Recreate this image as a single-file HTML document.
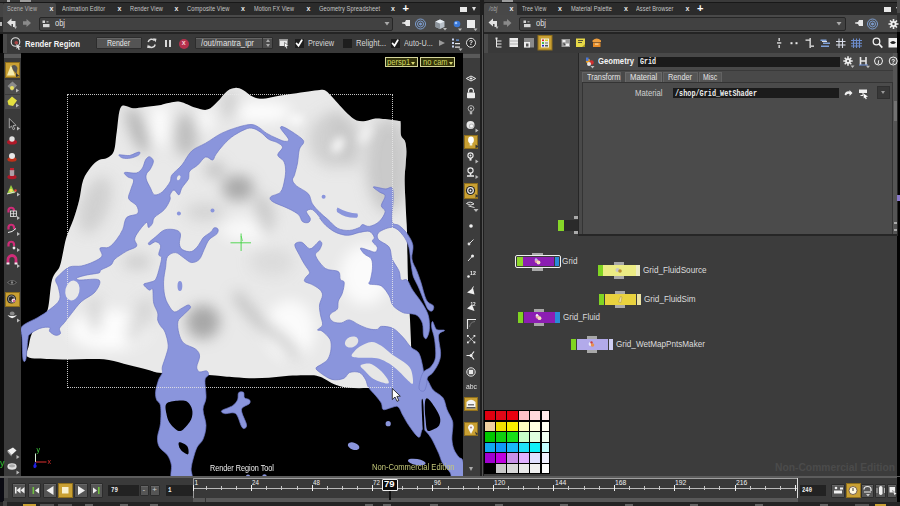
<!DOCTYPE html>
<html><head><meta charset="utf-8">
<style>
html,body{margin:0;padding:0;background:#000;}
body{width:900px;height:506px;position:relative;overflow:hidden;font-family:"Liberation Sans","DejaVu Sans",sans-serif;color:#ddd;font-size:8px;}
.a{position:absolute;}
.t{position:absolute;white-space:nowrap;line-height:1;transform-origin:0 0;}
.tab{transform-origin:0 0;position:absolute;top:6px;font-size:6.6px;color:#c6c6c6;white-space:nowrap;line-height:1;letter-spacing:.1px;}
.x{position:absolute;top:5px;font-size:7px;font-weight:bold;color:#e8e8e8;line-height:1;}
.btn{position:absolute;background:#545454;border:1px solid #2c2c2c;box-sizing:border-box;border-radius:1px;box-shadow:inset 0 1px 0 #666;}
.gold{position:absolute;background:#c9a033;border:1px solid #8f6f1c;box-sizing:border-box;}
.fld{position:absolute;background:#1b1b1b;box-sizing:border-box;}
.mono{font-family:"Liberation Mono","DejaVu Sans Mono",monospace;font-weight:bold;color:#f0f0f0;}
.lbl{transform-origin:0 0;position:absolute;white-space:nowrap;line-height:1;font-size:8.6px;color:#dcdcdc;}
.cb{position:absolute;width:9px;height:9px;background:#1e1e1e;}
</style></head><body>
<!-- top tab bar -->
<div class="a" style="left:0;top:0;width:900px;height:15px;background:#2b2b2b;"></div>
<div class="a" style="left:0;top:0;width:900px;height:2px;background:#3a3a3a;"></div><div class="a" style="left:0;top:2px;width:900px;height:1.2px;background:#181818;"></div><div class="a" style="left:7px;top:0;width:2.5px;height:1.5px;background:#ddd;opacity:.7"></div>
<div class="a" style="left:20px;top:0;width:11px;height:1.5px;background:#e0e0e0;opacity:.6"></div>
<div class="a" style="left:502px;top:0;width:11px;height:1.5px;background:#e0e0e0;opacity:.6"></div>
<!-- left pane tabs -->
<div class="a" style="left:3px;top:3px;width:53px;height:12px;background:#484848;border-radius:2px 2px 0 0;"></div>
<div class="tab" style="transform:scaleX(0.840);left:7px;color:#b4b4b4;">Scene View</div><div class="x" style="left:49.5px;">x</div>
<div class="tab" style="transform:scaleX(0.866);left:62px;">Animation Editor</div><div class="x" style="left:117.5px;">x</div>
<div class="tab" style="transform:scaleX(0.852);left:130px;">Render View</div><div class="x" style="left:174.5px;">x</div>
<div class="tab" style="transform:scaleX(0.869);left:187px;">Composite View</div><div class="x" style="left:241px;">x</div>
<div class="tab" style="transform:scaleX(0.843);left:254px;">Motion FX View</div><div class="x" style="left:306.5px;">x</div>
<div class="tab" style="transform:scaleX(0.872);left:318.5px;">Geometry Spreadsheet</div><div class="x" style="left:391px;">x</div>
<div class="t" style="left:402.5px;top:3px;font-size:11px;font-weight:bold;color:#fff;">+</div>
<div class="a" style="left:460px;top:6.5px;width:6.5px;height:5px;background:#e8e8e8;"></div>
<div class="a" style="left:472px;top:7px;width:0;height:0;border-left:2.5px solid transparent;border-right:2.5px solid transparent;border-top:4px solid #e0e0e0;"></div>
<!-- right pane tabs -->
<div class="a" style="left:484px;top:3px;width:33px;height:12px;background:#484848;border-radius:2px 2px 0 0;"></div>
<div class="tab" style="transform:scaleX(0.771);left:489px;color:#a8a8a8;font-style:italic;">/obj</div><div class="x" style="left:509.5px;">x</div>
<div class="tab" style="transform:scaleX(0.804);left:522px;">Tree View</div><div class="x" style="left:558px;">x</div>
<div class="tab" style="transform:scaleX(0.865);left:571px;">Material Palette</div><div class="x" style="left:624px;">x</div>
<div class="tab" style="transform:scaleX(0.856);left:636px;">Asset Browser</div><div class="x" style="left:685.5px;">x</div>
<div class="t" style="left:697px;top:3px;font-size:11px;font-weight:bold;color:#fff;">+</div>
<div class="a" style="left:884px;top:6.5px;width:6.5px;height:5px;background:#e8e8e8;"></div>
<div class="a" style="left:896px;top:7px;width:0;height:0;border-left:2.5px solid transparent;border-right:2.5px solid transparent;border-top:4px solid #e0e0e0;"></div>
<!-- path bars -->
<div class="a" style="left:0;top:3px;width:3px;height:14px;background:#444;"></div><div class="a" style="left:0;top:17px;width:3px;height:14.5px;background:#2e2e2e;"></div><div class="a" style="left:0;top:22px;width:2.2px;height:4px;background:#ddd;opacity:.8"></div>
<div class="a" style="left:3px;top:15px;width:477px;height:17px;background:#494949;"></div>
<div class="a" style="left:484px;top:15px;width:416px;height:17px;background:#494949;"></div>
<div class="a" style="left:38.5px;top:17px;width:354.5px;height:13.5px;background:#414141;border:1px solid #262626;box-sizing:border-box;border-radius:2px;"></div>
<div class="t" style="transform:scaleX(0.872);left:54.5px;top:18.5px;font-size:8.6px;color:#e0e0e0;">obj</div>
<div class="a" style="left:519px;top:17px;width:327px;height:13.5px;background:#414141;border:1px solid #262626;box-sizing:border-box;border-radius:2px;"></div>
<div class="t" style="transform:scaleX(0.872);left:536px;top:18.5px;font-size:8.6px;color:#e0e0e0;">obj</div>
<!-- toolbar row -->
<div class="a" style="left:0;top:31.5px;width:900px;height:2px;background:#242424;"></div>
<div class="a" style="left:3px;top:33.5px;width:477px;height:19.5px;background:#393939;"></div>
<div class="a" style="left:484px;top:33.5px;width:413px;height:19.5px;background:#393939;"></div>
<div class="a" style="left:3px;top:33.5px;width:4px;height:19.5px;background:#4a4a4a;"></div>
<div class="a" style="left:484px;top:33.5px;width:4px;height:19.5px;background:#4a4a4a;"></div>
<div class="t" style="transform:scaleX(0.871);left:24.5px;top:39.5px;font-size:8.9px;font-weight:bold;color:#f2f2f2;">Render Region</div>
<div class="btn" style="left:96px;top:36.5px;width:46px;height:12.5px;"></div>
<div class="t" style="transform:scaleX(0.807);left:107px;top:38.5px;font-size:8.7px;color:#e6e6e6;">Render</div>
<div class="a" style="left:164.5px;top:39.5px;width:2.2px;height:7.5px;background:#d8d8d8;"></div>
<div class="a" style="left:169px;top:39.5px;width:2.2px;height:7.5px;background:#d8d8d8;"></div>
<div class="a" style="left:179px;top:38.5px;width:10px;height:10px;border-radius:5px;background:#b4304c;"></div>
<div class="t" style="left:181.7px;top:39.4px;font-size:7px;font-weight:bold;color:#f4c8d0;">x</div>
<div class="btn" style="left:195px;top:36.5px;width:78px;height:12.5px;background:#4c4c4c;"></div>
<div class="t" style="transform:scaleX(0.907);left:201px;top:38.5px;font-size:8.7px;color:#e0e0e0;">/out/mantra_ipr</div>
<div class="a" style="left:262px;top:37.5px;width:1px;height:10.5px;background:#333;"></div>
<div class="a" style="left:265.5px;top:39px;width:0;height:0;border-left:2px solid transparent;border-right:2px solid transparent;border-bottom:3px solid #aaa;"></div>
<div class="a" style="left:265.5px;top:44px;width:0;height:0;border-left:2px solid transparent;border-right:2px solid transparent;border-top:3px solid #aaa;"></div>
<div class="cb" style="left:294.5px;top:38.5px;"></div>
<div class="t" style="transform:scaleX(0.841);left:308px;top:38.5px;font-size:8.7px;color:#d6d6d6;">Preview</div>
<div class="cb" style="left:343px;top:38.5px;"></div>
<div class="t" style="transform:scaleX(0.875);left:356px;top:38.5px;font-size:8.7px;color:#d6d6d6;">Relight...</div>
<div class="cb" style="left:390.5px;top:38.5px;"></div>
<div class="t" style="transform:scaleX(0.837);left:404px;top:38.5px;font-size:8.7px;color:#d6d6d6;">Auto-U...</div>
<div class="a" style="left:438.5px;top:39.5px;width:0;height:0;border-top:3.5px solid transparent;border-bottom:3.5px solid transparent;border-left:6px solid #9a9a9a;"></div>
<!-- viewport -->
<div class="a" style="left:0;top:53px;width:484px;height:424px;background:#000;"></div>
<svg class="a" style="left:0;top:0" width="900" height="506" viewBox="0 0 900 506"><defs><clipPath id="vp"><rect x="21" y="53" width="442" height="423.5"/></clipPath></defs><g clip-path="url(#vp)"><defs><clipPath id="tc"><path d="M121.0,107.0C123.7,103.2 129.0,108.3 133.0,108.3C137.0,108.3 140.8,107.5 145.0,107.0C149.2,106.5 153.8,106.2 158.0,105.5C162.2,104.8 166.3,103.3 170.0,102.7C173.7,102.1 175.7,100.9 180.0,101.7C184.3,102.5 191.1,106.4 195.7,107.7C200.3,109.0 203.9,110.6 207.5,109.6C211.1,108.6 214.1,104.8 217.4,101.7C220.7,98.6 224.3,93.2 227.3,90.9C230.3,88.6 232.6,88.1 235.2,87.9C237.8,87.7 240.0,88.4 243.0,89.9C246.0,91.4 249.7,95.3 253.0,96.8C256.3,98.3 259.1,98.9 263.0,98.8C266.9,98.7 271.8,97.0 276.7,96.2C281.6,95.4 287.2,94.6 292.5,93.8C297.8,93.0 303.7,92.2 308.3,91.5C312.9,90.8 317.1,90.0 320.0,89.9C322.9,89.8 324.0,89.8 326.0,90.9C328.0,92.1 329.7,94.3 332.0,96.8C334.3,99.3 337.1,102.6 340.0,105.7C342.9,108.8 346.8,113.1 349.6,115.6C352.4,118.1 354.0,119.6 356.6,120.5C359.2,121.4 362.4,121.4 365.5,121.1C368.6,120.8 372.0,118.8 375.3,118.5C378.6,118.2 381.2,118.7 385.2,119.1C389.1,119.5 396.4,120.5 399.0,121.1C401.6,121.7 400.3,120.1 400.6,122.5C400.9,124.9 400.3,132.2 401.0,135.3C401.7,138.4 404.1,138.7 405.0,141.3C405.9,143.9 406.3,147.2 406.4,151.1C406.5,155.0 405.9,160.2 405.6,165.0C405.3,169.8 404.6,174.2 404.6,180.0C404.6,185.8 405.1,193.2 405.4,199.8C405.7,206.4 406.1,214.2 406.4,219.5C406.7,224.8 406.7,221.3 407.0,231.4C407.3,241.5 407.5,265.3 408.0,280.0C408.5,294.7 409.3,305.0 410.0,319.5C410.7,334.0 411.5,356.2 412.0,367.0C412.5,377.8 420.3,380.5 413.0,384.0C405.7,387.5 380.2,387.6 368.0,388.0C355.8,388.4 348.0,388.2 340.0,386.3C332.0,384.4 325.3,378.6 320.0,376.8C314.7,375.0 313.5,375.5 308.3,375.3C303.1,375.1 295.2,375.4 288.6,375.8C282.0,376.2 275.4,377.4 268.8,377.8C262.2,378.2 255.6,378.4 249.0,378.2C242.4,378.0 236.1,377.4 229.3,376.8C222.6,376.2 219.7,375.5 208.5,374.9C197.3,374.2 172.3,373.7 162.3,372.9C152.3,372.1 154.1,371.2 148.5,369.9C142.9,368.6 135.3,366.6 128.7,365.0C122.1,363.4 115.5,361.0 108.9,360.0C102.3,359.0 95.8,359.2 89.2,359.1C82.6,359.0 76.0,359.4 69.4,359.4C62.8,359.4 56.5,359.5 49.6,359.1C42.7,358.7 31.3,359.4 27.9,357.1C24.4,354.8 28.2,349.1 28.9,345.2C29.6,341.2 30.0,337.6 31.9,333.4C33.8,329.2 37.4,324.0 40.0,320.0C42.6,316.0 45.7,316.3 47.7,309.6C49.7,302.9 50.0,287.1 52.0,280.0C54.0,272.9 57.8,271.1 59.5,267.0C61.2,262.9 61.4,260.1 62.5,255.1C63.6,250.2 64.6,243.2 66.4,237.3C68.2,231.4 71.2,225.8 73.4,219.5C75.6,213.2 77.7,206.4 79.3,199.8C80.9,193.2 81.2,185.5 83.2,180.0C85.2,174.5 88.4,170.3 91.0,167.0C93.6,163.7 96.3,161.5 99.0,160.0C101.7,158.5 104.5,159.5 107.0,158.0C109.5,156.5 112.3,155.4 113.9,151.0C115.5,146.6 115.6,138.7 116.8,131.4C118.0,124.1 118.3,110.8 121.0,107.0Z"/></clipPath><filter id="bl" x="-50%" y="-50%" width="200%" height="200%"><feGaussianBlur stdDeviation="7"/></filter><filter id="bl2" x="-50%" y="-50%" width="200%" height="200%"><feGaussianBlur stdDeviation="4"/></filter></defs>
<path d="M121.0,107.0C123.7,103.2 129.0,108.3 133.0,108.3C137.0,108.3 140.8,107.5 145.0,107.0C149.2,106.5 153.8,106.2 158.0,105.5C162.2,104.8 166.3,103.3 170.0,102.7C173.7,102.1 175.7,100.9 180.0,101.7C184.3,102.5 191.1,106.4 195.7,107.7C200.3,109.0 203.9,110.6 207.5,109.6C211.1,108.6 214.1,104.8 217.4,101.7C220.7,98.6 224.3,93.2 227.3,90.9C230.3,88.6 232.6,88.1 235.2,87.9C237.8,87.7 240.0,88.4 243.0,89.9C246.0,91.4 249.7,95.3 253.0,96.8C256.3,98.3 259.1,98.9 263.0,98.8C266.9,98.7 271.8,97.0 276.7,96.2C281.6,95.4 287.2,94.6 292.5,93.8C297.8,93.0 303.7,92.2 308.3,91.5C312.9,90.8 317.1,90.0 320.0,89.9C322.9,89.8 324.0,89.8 326.0,90.9C328.0,92.1 329.7,94.3 332.0,96.8C334.3,99.3 337.1,102.6 340.0,105.7C342.9,108.8 346.8,113.1 349.6,115.6C352.4,118.1 354.0,119.6 356.6,120.5C359.2,121.4 362.4,121.4 365.5,121.1C368.6,120.8 372.0,118.8 375.3,118.5C378.6,118.2 381.2,118.7 385.2,119.1C389.1,119.5 396.4,120.5 399.0,121.1C401.6,121.7 400.3,120.1 400.6,122.5C400.9,124.9 400.3,132.2 401.0,135.3C401.7,138.4 404.1,138.7 405.0,141.3C405.9,143.9 406.3,147.2 406.4,151.1C406.5,155.0 405.9,160.2 405.6,165.0C405.3,169.8 404.6,174.2 404.6,180.0C404.6,185.8 405.1,193.2 405.4,199.8C405.7,206.4 406.1,214.2 406.4,219.5C406.7,224.8 406.7,221.3 407.0,231.4C407.3,241.5 407.5,265.3 408.0,280.0C408.5,294.7 409.3,305.0 410.0,319.5C410.7,334.0 411.5,356.2 412.0,367.0C412.5,377.8 420.3,380.5 413.0,384.0C405.7,387.5 380.2,387.6 368.0,388.0C355.8,388.4 348.0,388.2 340.0,386.3C332.0,384.4 325.3,378.6 320.0,376.8C314.7,375.0 313.5,375.5 308.3,375.3C303.1,375.1 295.2,375.4 288.6,375.8C282.0,376.2 275.4,377.4 268.8,377.8C262.2,378.2 255.6,378.4 249.0,378.2C242.4,378.0 236.1,377.4 229.3,376.8C222.6,376.2 219.7,375.5 208.5,374.9C197.3,374.2 172.3,373.7 162.3,372.9C152.3,372.1 154.1,371.2 148.5,369.9C142.9,368.6 135.3,366.6 128.7,365.0C122.1,363.4 115.5,361.0 108.9,360.0C102.3,359.0 95.8,359.2 89.2,359.1C82.6,359.0 76.0,359.4 69.4,359.4C62.8,359.4 56.5,359.5 49.6,359.1C42.7,358.7 31.3,359.4 27.9,357.1C24.4,354.8 28.2,349.1 28.9,345.2C29.6,341.2 30.0,337.6 31.9,333.4C33.8,329.2 37.4,324.0 40.0,320.0C42.6,316.0 45.7,316.3 47.7,309.6C49.7,302.9 50.0,287.1 52.0,280.0C54.0,272.9 57.8,271.1 59.5,267.0C61.2,262.9 61.4,260.1 62.5,255.1C63.6,250.2 64.6,243.2 66.4,237.3C68.2,231.4 71.2,225.8 73.4,219.5C75.6,213.2 77.7,206.4 79.3,199.8C80.9,193.2 81.2,185.5 83.2,180.0C85.2,174.5 88.4,170.3 91.0,167.0C93.6,163.7 96.3,161.5 99.0,160.0C101.7,158.5 104.5,159.5 107.0,158.0C109.5,156.5 112.3,155.4 113.9,151.0C115.5,146.6 115.6,138.7 116.8,131.4C118.0,124.1 118.3,110.8 121.0,107.0Z" fill="#e9e9e9"/>
<g clip-path="url(#tc)">
<g filter="url(#bl)">
<ellipse cx="138" cy="130" rx="8" ry="25" fill="#a8a8a8" opacity=".8" transform="rotate(-22 138 130)"/>
<ellipse cx="160" cy="125" rx="9" ry="22" fill="#fff" opacity=".9"/>
<ellipse cx="186" cy="135" rx="12" ry="22" fill="#b4b4b4" opacity=".8"/>
<ellipse cx="205" cy="120" rx="8" ry="12" fill="#fff" opacity=".8"/>
<ellipse cx="262" cy="112" rx="30" ry="10" fill="#fff" opacity=".9"/>
<ellipse cx="230" cy="105" rx="8" ry="14" fill="#c0c0c0" opacity=".7"/>
<ellipse cx="335" cy="140" rx="26" ry="28" fill="#bcbcbc" opacity=".55"/>
<ellipse cx="388" cy="165" rx="22" ry="48" fill="#bcbcbc" opacity=".7"/>
<ellipse cx="238" cy="188" rx="16" ry="13" fill="#999" opacity=".8"/>
<ellipse cx="215" cy="170" rx="10" ry="8" fill="#b0b0b0" opacity=".7"/>
<ellipse cx="203" cy="322" rx="17" ry="17" fill="#9c9c9c" opacity=".85"/>
<ellipse cx="272" cy="262" rx="22" ry="14" fill="#c8c8c8" opacity=".4"/>
<ellipse cx="95" cy="205" rx="14" ry="30" fill="#c6c6c6" opacity=".7" transform="rotate(20 95 205)"/>
<ellipse cx="110" cy="330" rx="40" ry="20" fill="#fff" opacity=".9"/>
<ellipse cx="290" cy="330" rx="25" ry="30" fill="#fff" opacity=".8"/>
<ellipse cx="365" cy="275" rx="25" ry="30" fill="#fff" opacity=".8"/>
<ellipse cx="250" cy="230" rx="30" ry="12" fill="#fff" opacity=".7"/>
<ellipse cx="140" cy="320" rx="10" ry="25" fill="#c8c8c8" opacity=".6" transform="rotate(25 140 320)"/>
<path d="M236,293 Q250,316 270,330 T297,358" stroke="#a8a8a8" stroke-width="9" fill="none" opacity=".7"/>
<ellipse cx="137" cy="262" rx="14" ry="7" fill="#b8b8b8" opacity=".6"/>
<ellipse cx="95" cy="315" rx="7" ry="18" fill="#c0c0c0" opacity=".6"/>
<ellipse cx="265" cy="215" rx="9" ry="22" fill="#b4b4b4" opacity=".6" transform="rotate(-15 265 215)"/>
<ellipse cx="205" cy="212" rx="20" ry="9" fill="#c0c0c0" opacity=".5"/>
<ellipse cx="345" cy="140" rx="8" ry="32" fill="#c0c0c0" opacity=".5" transform="rotate(-20 345 140)"/>
</g>
<g filter="url(#bl2)">
<ellipse cx="338" cy="145" rx="5" ry="9" fill="#fff" opacity=".9" transform="rotate(30 338 145)"/>
<ellipse cx="296" cy="120" rx="8" ry="5" fill="#fff" opacity=".8"/>
<ellipse cx="365" cy="135" rx="5" ry="10" fill="#fff" opacity=".6" transform="rotate(30 365 135)"/>
</g>
</g>
<path d="M118.8,155.1C118.9,155.6 120.8,157.6 122.8,158.1C124.8,158.6 128.1,158.6 130.7,158.1C133.3,157.6 137.1,156.1 138.6,155.1C140.1,154.1 140.1,152.4 139.6,152.1C139.1,151.8 137.2,152.5 135.6,153.1C133.9,153.7 132.0,155.2 129.7,155.5C127.4,155.8 123.8,155.1 122.0,155.0C120.2,154.9 118.7,154.6 118.8,155.1Z" fill="#8a95dc" stroke="#6e79c6" stroke-width=".7"/>
<path d="M149.4,156.7C150.7,156.9 153.2,159.0 153.4,161.0C153.6,163.0 151.6,166.8 150.4,168.9C149.2,171.1 147.2,172.1 146.5,173.9C145.8,175.8 145.8,177.7 146.5,180.0C147.2,182.3 149.1,185.4 150.4,187.9C151.7,190.4 152.4,194.1 154.4,194.8C156.4,195.5 159.7,194.0 162.3,191.9C164.9,189.8 168.4,184.8 170.0,182.0C171.6,179.2 170.0,177.7 172.0,174.9C174.0,172.1 178.6,169.0 181.9,165.0C185.2,161.0 187.8,154.6 191.7,151.0C195.6,147.4 200.6,146.1 205.6,143.2C210.6,140.3 216.1,136.0 221.4,133.4C226.7,130.8 232.3,128.9 237.2,127.4C242.1,125.9 247.4,124.5 251.0,124.5C254.6,124.5 256.3,125.9 258.9,127.4C261.5,128.9 263.8,131.6 266.8,133.4C269.8,135.2 273.7,137.0 276.7,138.3C279.7,139.6 282.6,141.1 284.6,141.3C286.6,141.5 289.2,141.5 288.6,139.3C288.0,137.2 281.5,130.5 280.7,128.4C279.9,126.4 281.3,126.2 283.6,127.0C285.9,127.8 291.4,131.3 294.5,133.4C297.6,135.5 300.9,137.7 302.4,139.3C303.9,140.9 303.9,141.5 303.4,143.2C302.9,144.8 300.4,145.9 299.4,149.2C298.4,152.5 298.3,158.7 297.5,163.0C296.7,167.3 295.3,172.1 294.5,174.9C293.7,177.7 292.2,178.2 292.5,180.0C292.8,181.8 293.9,183.6 296.5,185.9C299.1,188.2 305.7,190.8 308.3,193.8C310.9,196.8 310.4,200.6 312.3,203.7C314.2,206.8 317.4,210.0 320.0,212.6C322.6,215.2 324.9,216.9 327.9,219.5C330.9,222.1 334.2,226.6 337.8,228.4C341.4,230.2 346.0,230.6 349.6,230.4C353.2,230.2 357.4,228.4 359.5,227.4C361.6,226.4 360.9,224.7 362.5,224.5C364.1,224.3 366.6,226.9 369.4,226.4C372.2,225.9 376.7,224.0 379.3,221.5C381.9,219.0 384.9,214.2 385.2,211.6C385.5,209.0 381.3,208.3 381.3,205.7C381.3,203.1 385.5,198.1 385.2,195.8C384.9,193.5 381.3,193.4 379.3,191.9C377.3,190.4 372.4,187.4 373.4,186.9C374.4,186.4 382.1,188.7 385.2,188.9C388.3,189.1 390.8,186.1 392.1,187.9C393.4,189.7 393.1,194.2 393.1,199.8C393.1,205.4 391.1,217.2 392.1,221.5C393.1,225.8 396.5,223.5 399.0,225.5C401.5,227.5 404.7,230.1 407.0,233.4C409.3,236.7 412.1,240.9 412.9,245.2C413.7,249.5 411.2,254.7 411.9,259.0C412.5,263.3 415.3,267.1 416.8,270.9C418.3,274.7 419.2,277.2 420.8,282.0C422.4,286.8 424.3,295.9 426.4,299.9C428.5,303.9 432.4,304.0 433.4,305.8C434.4,307.6 433.2,310.1 432.4,310.8C431.6,311.5 429.7,311.3 428.4,309.8C427.1,308.3 426.1,305.5 424.5,301.9C422.9,298.3 420.4,291.6 418.8,288.0C417.2,284.4 415.9,282.2 414.9,280.0C413.9,277.8 413.6,277.7 412.9,274.9C412.2,272.1 411.6,267.6 410.9,263.0C410.2,258.4 410.2,251.8 408.9,247.2C407.6,242.6 405.6,238.6 403.0,235.3C400.4,232.0 396.9,228.0 393.0,227.4C389.1,226.8 381.8,230.0 379.3,232.0C376.9,234.0 376.7,236.8 378.3,239.3C379.9,241.8 386.9,243.9 389.2,247.2C391.5,250.5 390.5,255.1 392.1,259.0C393.7,262.9 397.5,267.4 399.0,270.9C400.5,274.4 399.7,278.5 401.0,280.0C402.3,281.5 405.1,278.3 407.0,280.0C408.9,281.7 410.0,286.0 412.6,290.0C415.2,294.0 419.9,299.5 422.5,303.8C425.1,308.1 427.2,311.4 428.4,315.7C429.5,320.0 429.7,325.7 429.4,329.5C429.1,333.3 427.4,337.4 426.4,338.4C425.4,339.4 424.1,338.0 423.5,335.5C422.9,333.0 423.5,326.9 422.5,323.6C421.5,320.3 419.5,317.4 417.5,315.7C415.5,314.0 413.0,314.2 410.6,313.7C408.2,313.2 405.9,313.9 403.0,312.6C400.1,311.3 395.4,308.5 393.1,305.7C390.8,302.9 391.2,299.1 389.2,295.8C387.2,292.5 384.6,287.9 381.3,285.9C378.0,283.9 371.2,285.0 369.4,284.0C367.6,283.0 369.9,282.5 370.4,280.0C370.9,277.5 372.2,272.4 372.4,268.9C372.6,265.4 372.7,261.5 371.4,259.0C370.1,256.5 366.3,255.9 364.5,254.1C362.7,252.3 359.9,248.8 360.5,248.2C361.1,247.5 365.9,249.5 368.4,250.2C370.9,250.8 373.8,252.6 375.3,252.1C376.8,251.6 377.8,249.0 377.3,247.2C376.8,245.4 372.9,243.0 372.4,241.3C371.9,239.7 374.8,239.0 374.3,237.3C373.8,235.7 371.9,232.2 369.4,231.4C366.9,230.6 363.1,231.8 359.5,232.4C355.9,233.1 351.6,235.3 347.7,235.3C343.8,235.3 339.4,234.0 335.8,232.4C332.2,230.8 328.5,227.8 325.9,225.5C323.3,223.2 321.0,219.8 320.0,218.5C319.0,217.2 321.3,219.0 320.0,217.5C318.7,216.0 314.6,210.6 312.3,209.6C310.0,208.6 306.7,210.1 306.4,211.6C306.1,213.1 310.0,216.7 310.3,218.5C310.6,220.3 309.6,222.0 308.3,222.5C307.0,223.0 304.0,222.8 302.4,221.5C300.8,220.2 300.8,216.7 298.5,214.6C296.2,212.5 292.9,210.8 288.6,208.7C284.3,206.5 275.8,203.7 272.8,201.7C269.8,199.7 269.5,198.4 270.8,196.8C272.1,195.2 278.4,194.7 280.7,191.9C283.0,189.1 283.8,183.8 284.6,180.0C285.4,176.2 285.8,172.2 285.6,169.0C285.4,165.8 284.9,163.3 283.6,161.0C282.3,158.7 277.9,157.3 277.7,155.0C277.5,152.7 282.8,149.3 282.6,147.2C282.4,145.1 279.0,143.6 276.7,142.3C274.4,141.0 271.4,141.0 268.8,139.3C266.2,137.7 263.5,134.2 260.9,132.4C258.3,130.6 255.7,128.9 253.0,128.4C250.3,127.9 248.6,127.9 245.0,129.4C241.4,130.9 235.2,134.3 231.3,137.3C227.4,140.3 224.0,144.2 221.4,147.2C218.8,150.1 217.0,152.9 215.5,155.0C214.0,157.1 214.2,159.7 212.5,160.0C210.8,160.3 208.1,156.2 205.6,157.0C203.1,157.8 200.3,162.7 197.7,165.0C195.1,167.3 191.3,169.0 189.8,171.0C188.3,173.0 189.1,175.3 188.8,176.8C188.5,178.3 189.0,178.2 187.8,180.0C186.7,181.8 183.4,185.4 181.9,187.9C180.4,190.4 180.2,194.5 178.9,194.8C177.6,195.1 175.5,189.9 174.0,189.9C172.5,189.9 170.7,193.2 170.0,194.8C169.3,196.5 170.9,197.3 170.0,199.8C169.1,202.3 166.9,206.7 164.3,209.6C161.7,212.5 156.4,215.2 154.4,217.5C152.4,219.8 153.4,221.8 152.4,223.5C151.4,225.2 149.5,227.6 148.5,227.4C147.5,227.2 148.2,221.8 146.5,222.5C144.8,223.2 140.6,228.6 138.6,231.4C136.6,234.2 134.9,236.8 134.6,239.3C134.3,241.8 137.9,244.2 136.6,246.2C135.3,248.2 130.3,249.0 126.7,251.1C123.1,253.2 117.5,256.7 114.9,259.0C112.3,261.3 113.2,263.2 110.9,265.0C108.6,266.8 103.0,268.6 101.0,269.9C99.0,271.2 101.3,272.1 99.0,272.9C96.7,273.7 90.8,274.1 87.2,274.9C83.6,275.7 78.6,276.9 77.3,277.8C76.0,278.7 75.7,279.6 79.3,280.0C82.9,280.4 96.4,278.0 99.0,280.0C101.6,282.0 98.0,288.3 95.1,291.9C92.1,295.5 85.2,298.1 81.3,301.7C77.3,305.3 74.2,310.1 71.4,313.6C68.6,317.1 66.5,320.0 64.5,322.5C62.5,325.0 60.2,326.6 59.5,328.4C58.8,330.2 61.1,332.2 60.5,333.4C59.9,334.5 57.4,335.6 55.6,335.3C53.8,335.0 50.6,332.7 49.6,331.4C48.6,330.1 51.2,327.9 49.6,327.4C48.0,326.9 43.1,327.2 39.8,328.4C36.5,329.5 31.9,332.5 29.9,334.3C27.9,336.1 28.6,335.2 27.9,339.3C27.2,343.4 26.7,355.7 25.9,359.0C25.1,362.3 23.6,362.6 23.0,359.0C22.4,355.4 22.3,342.4 22.0,337.3C21.7,332.2 20.4,330.7 21.0,328.4C21.6,326.1 23.1,325.3 25.9,323.5C28.7,321.7 33.8,319.8 37.8,317.5C41.8,315.2 46.0,312.6 49.6,309.6C53.2,306.7 58.0,303.4 59.5,299.8C61.0,296.2 59.1,291.2 58.5,287.9C57.9,284.6 55.4,282.2 55.6,280.0C55.8,277.8 57.2,277.1 59.5,274.9C61.8,272.7 65.8,268.5 69.4,267.0C73.0,265.5 77.3,266.8 81.3,266.0C85.2,265.2 89.6,263.6 93.1,262.0C96.5,260.4 100.8,258.4 102.0,256.1C103.2,253.8 98.8,249.7 100.0,248.2C101.2,246.7 106.1,248.7 108.9,247.2C111.7,245.7 114.5,242.3 116.8,239.3C119.1,236.3 121.1,233.0 122.8,229.4C124.5,225.8 124.2,220.1 126.7,217.5C129.2,214.9 135.9,215.6 137.6,213.6C139.2,211.6 138.1,208.2 136.6,205.7C135.1,203.2 129.7,201.4 128.7,198.8C127.7,196.2 129.9,193.0 130.7,189.9C131.5,186.8 134.1,182.2 133.6,180.0C133.1,177.8 129.2,178.1 127.7,176.8C126.2,175.6 123.2,173.2 124.7,172.5C126.2,171.8 133.6,173.7 136.6,172.9C139.6,172.1 141.0,170.1 142.5,167.9C144.0,165.8 144.3,161.9 145.5,160.0C146.7,158.1 148.1,156.5 149.4,156.7Z" fill="#8a95dc" stroke="#6e79c6" stroke-width=".7"/>
<path d="M148.8,242.7C149.8,241.4 153.1,238.9 155.7,236.8C158.3,234.7 161.3,231.1 164.6,229.9C167.9,228.8 172.9,229.2 175.5,229.9C178.1,230.6 179.8,231.5 180.4,233.8C181.1,236.1 179.1,241.1 179.4,243.7C179.7,246.3 180.4,248.3 182.4,249.6C184.4,250.9 188.7,252.2 191.3,251.6C193.9,250.9 196.2,248.0 198.2,245.7C200.2,243.4 201.0,240.1 203.1,237.8C205.2,235.5 209.2,233.6 211.0,231.9C212.8,230.2 212.8,228.4 214.0,227.9C215.2,227.4 217.4,227.9 217.9,228.9C218.4,229.9 218.4,232.0 216.9,233.8C215.4,235.6 211.1,237.2 209.0,239.8C206.9,242.4 205.7,246.3 204.1,249.6C202.5,252.9 201.3,257.4 199.2,259.5C197.1,261.6 193.9,262.8 191.3,262.5C188.7,262.2 186.0,259.1 183.4,257.5C180.8,255.8 178.2,252.8 175.5,252.6C172.8,252.4 169.2,254.1 167.5,256.6C165.8,259.1 166.2,263.3 165.6,267.4C164.9,271.5 163.8,276.7 163.6,281.3C163.4,285.9 163.8,291.2 164.6,295.1C165.4,299.1 166.8,302.2 168.5,305.0C170.2,307.8 172.2,311.4 174.5,311.9C176.8,312.4 180.1,309.0 182.4,307.9C184.7,306.8 187.0,305.0 188.3,305.0C189.6,305.0 191.1,306.2 190.3,307.9C189.5,309.5 185.5,312.6 183.4,314.9C181.3,317.2 178.7,318.4 177.9,321.5C177.2,324.6 177.9,329.8 178.9,333.4C179.9,337.0 181.0,340.6 183.8,343.2C186.6,345.8 193.1,347.0 195.7,349.2C198.3,351.4 199.4,353.1 199.6,356.1C199.8,359.1 196.7,364.4 196.7,367.0C196.7,369.6 197.9,371.2 199.6,371.9C201.2,372.5 205.1,370.4 206.6,370.9C208.1,371.4 208.8,373.4 208.5,374.9C208.2,376.4 205.4,376.2 205.0,380.0C204.6,383.8 206.3,392.9 206.0,397.8C205.7,402.7 203.0,405.0 203.0,409.6C203.0,414.2 206.0,420.6 206.0,425.5C206.0,430.4 204.5,435.7 203.0,439.3C201.5,442.9 198.8,443.9 197.1,447.2C195.4,450.5 194.1,455.4 193.1,459.0C192.1,462.6 191.4,465.4 191.1,468.9C190.8,472.4 194.2,478.1 191.1,480.0C188.0,481.9 175.7,482.5 172.4,480.0C169.1,477.5 172.2,469.1 171.4,465.0C170.6,460.9 169.4,458.1 167.4,455.1C165.4,452.1 161.2,450.2 159.5,447.2C157.8,444.2 157.3,441.2 157.5,437.3C157.7,433.4 160.0,428.8 160.5,423.5C161.0,418.2 161.2,409.6 160.5,405.7C159.8,401.8 157.4,402.1 156.6,399.8C155.8,397.5 155.3,395.2 155.6,391.9C155.9,388.6 157.4,383.2 158.5,380.0C159.6,376.8 161.7,375.1 162.3,372.9C162.9,370.7 161.7,370.0 162.3,367.0C163.0,364.0 165.2,358.7 166.2,355.1C167.2,351.5 168.4,349.1 168.2,345.2C168.0,341.3 166.3,335.3 165.0,332.0C163.7,328.7 161.5,327.5 160.3,325.5C159.1,323.5 158.1,322.1 157.7,320.0C157.3,317.9 158.4,315.7 157.7,312.9C157.0,310.1 154.5,306.9 153.7,303.0C152.9,299.1 153.3,291.3 152.7,289.2C152.0,287.1 150.8,290.4 149.8,290.2C148.8,290.0 147.8,289.2 146.8,288.2C145.8,287.2 143.3,285.2 143.8,284.2C144.3,283.2 147.8,283.1 149.8,282.3C151.8,281.5 154.1,281.8 155.7,279.3C157.3,276.8 158.6,271.0 159.6,267.4C160.6,263.8 161.8,259.6 161.6,257.5C161.4,255.4 158.9,256.6 158.7,254.6C158.5,252.6 161.1,247.8 160.6,245.7C160.1,243.5 157.5,241.9 155.7,241.7C153.9,241.5 151.0,244.5 149.8,244.7C148.7,244.9 147.8,244.0 148.8,242.7Z" fill="#8a95dc" stroke="#6e79c6" stroke-width=".7"/>
<path d="M238.6,392.8C239.6,391.6 242.5,391.5 243.5,392.3C244.5,393.1 243.5,396.6 244.5,397.8C245.5,399.1 248.6,398.8 249.4,399.8C250.2,400.8 250.7,402.1 249.4,403.7C248.1,405.3 242.0,406.1 241.5,409.6C241.0,413.1 246.0,421.4 246.5,424.5C247.0,427.6 245.3,428.1 244.5,428.4C243.7,428.7 243.0,428.9 241.5,426.4C240.0,423.9 238.4,415.7 235.6,413.6C232.8,411.5 227.0,414.1 224.7,413.6C222.4,413.1 220.5,411.9 221.8,410.6C223.1,409.3 230.0,407.5 232.6,405.7C235.2,403.9 236.6,401.9 237.6,399.8C238.6,397.7 237.6,394.1 238.6,392.8Z" fill="#8a95dc" stroke="#6e79c6" stroke-width=".7"/>
<path d="M294.8,244.8C295.1,242.6 299.2,241.6 301.7,242.3C304.2,243.0 307.3,248.4 309.6,248.8C311.9,249.2 314.0,246.1 315.6,244.8C317.2,243.5 318.4,241.1 319.5,240.9C320.6,240.7 321.9,242.3 321.9,243.8C321.9,245.3 320.6,247.8 319.5,249.8C318.4,251.8 314.6,252.6 315.6,255.7C316.6,258.8 321.7,265.9 325.5,268.5C329.3,271.1 335.8,269.7 338.3,271.5C340.8,273.3 339.3,277.6 340.3,279.4C341.3,281.2 343.9,280.1 344.2,282.4C344.5,284.7 343.3,290.1 342.3,293.2C341.3,296.3 339.1,298.5 338.3,301.1C337.5,303.8 338.5,307.1 337.3,309.1C336.1,311.1 332.7,311.7 331.4,313.0C330.1,314.3 329.1,315.5 329.4,317.0C329.7,318.5 331.4,320.9 333.4,321.9C335.4,322.9 338.7,323.2 341.3,322.9C343.9,322.6 346.2,319.6 349.2,319.9C352.2,320.2 355.8,323.4 359.1,324.9C362.4,326.4 365.9,328.1 368.9,328.8C371.9,329.6 375.2,329.8 377.3,329.4C379.4,329.0 378.7,326.6 381.3,326.4C383.9,326.2 389.5,326.6 393.1,328.4C396.7,330.2 400.0,334.2 403.0,337.3C406.0,340.4 408.3,344.6 410.9,347.2C413.5,349.8 416.8,349.8 418.8,353.1C420.8,356.4 422.0,363.1 422.8,367.0C423.6,370.9 423.6,374.0 423.8,376.8C424.0,379.6 423.4,383.5 424.0,384.0C424.6,384.5 425.7,379.0 427.2,380.0C428.7,381.0 430.5,386.9 433.1,389.9C435.7,392.9 440.7,394.5 443.0,397.8C445.3,401.1 445.5,406.0 447.0,409.6C448.5,413.2 450.9,416.9 451.9,419.5C452.9,422.1 452.9,422.2 452.9,425.5C452.9,428.8 451.7,435.4 451.9,439.3C452.1,443.2 452.8,446.2 453.9,449.2C455.0,452.2 457.3,455.1 458.8,457.1C460.3,459.1 461.9,457.2 462.8,461.0C463.7,464.8 465.8,476.8 464.0,480.0C462.2,483.2 454.3,481.2 452.0,480.0C449.7,478.8 452.0,475.7 450.4,472.9C448.8,470.1 444.5,466.3 442.5,463.0C440.5,459.7 440.6,457.4 438.6,453.1C436.6,448.8 433.3,441.2 430.7,437.3C428.1,433.4 424.8,429.4 422.8,429.4C420.8,429.4 421.1,437.9 418.8,437.3C416.5,436.7 411.5,429.1 408.9,425.5C406.3,421.9 404.8,418.7 403.0,415.6C401.2,412.5 400.0,408.0 398.0,406.7C396.0,405.4 393.6,407.2 391.1,407.7C388.6,408.2 384.8,410.4 383.2,409.6C381.6,408.8 382.6,405.5 381.3,403.1C380.0,400.7 377.5,397.8 375.3,395.2C373.1,392.6 370.0,389.9 368.4,387.3C366.8,384.7 367.0,381.9 365.5,379.4C364.0,376.9 362.1,373.6 359.5,372.5C356.9,371.4 352.2,371.5 349.6,372.5C347.0,373.5 346.6,377.2 343.7,378.4C340.8,379.5 335.8,380.4 331.9,379.4C327.9,378.4 322.6,374.4 320.0,372.5C317.4,370.6 315.7,369.4 316.0,368.0C316.3,366.6 320.0,365.5 322.0,364.0C324.0,362.5 326.5,361.5 328.0,359.0C329.5,356.5 330.7,352.5 331.0,349.2C331.3,345.9 331.5,342.3 330.0,339.3C328.5,336.3 324.1,332.6 322.0,331.0C319.9,329.4 317.4,331.0 317.5,330.0C317.6,329.0 322.0,327.4 322.5,324.9C323.0,322.4 321.0,318.3 320.5,315.0C320.0,311.7 319.2,308.4 319.5,305.1C319.8,301.8 322.5,297.8 322.5,295.2C322.5,292.6 321.3,291.1 319.5,289.3C317.7,287.5 314.1,285.6 311.6,284.3C309.1,283.0 305.7,282.5 304.7,281.4C303.7,280.2 304.9,278.9 305.7,277.4C306.5,275.9 309.8,274.6 309.6,272.5C309.4,270.4 306.3,267.4 304.7,264.6C303.1,261.8 301.4,259.0 299.8,255.7C298.2,252.4 294.5,247.0 294.8,244.8Z" fill="#8a95dc" stroke="#6e79c6" stroke-width=".7"/>
<path d="M432.6,321.5C433.4,321.8 434.6,327.9 436.6,329.4C438.6,330.9 444.2,329.4 444.5,330.4C444.8,331.4 439.2,331.5 438.6,335.3C438.0,339.1 440.6,348.5 440.6,353.1C440.6,357.7 439.9,359.7 438.6,363.0C437.3,366.3 434.4,370.6 432.6,372.9C430.8,375.2 428.7,375.1 427.7,377.0C426.7,378.9 427.3,381.7 426.7,384.0C426.1,386.3 425.3,390.3 424.0,391.0C422.7,391.7 419.2,391.0 419.0,388.0C418.8,385.0 420.9,376.4 422.8,372.9C424.8,369.4 428.6,369.6 430.7,367.0C432.8,364.4 435.0,361.7 435.6,357.1C436.2,352.5 435.2,344.2 434.6,339.3C434.0,334.4 432.0,330.4 431.7,327.4C431.4,324.4 431.8,321.2 432.6,321.5Z" fill="#8a95dc" stroke="#6e79c6" stroke-width=".7"/>
<path d="M351.6,355.7C351.6,353.9 356.2,349.1 359.5,346.8C362.8,344.5 367.8,342.1 371.4,341.9C375.0,341.7 378.0,343.8 381.3,345.8C384.6,347.8 387.5,351.1 391.1,353.7C394.7,356.3 399.7,359.0 403.0,361.6C406.3,364.2 409.2,365.9 410.9,369.5C412.5,373.1 413.5,381.8 412.9,383.4C412.2,385.0 409.3,381.4 407.0,379.4C404.7,377.4 402.0,374.1 399.0,371.5C396.0,368.9 392.5,365.7 389.2,363.6C385.9,361.5 382.6,359.7 379.3,358.7C376.0,357.7 372.7,357.9 369.4,357.7C366.1,357.5 362.5,358.0 359.5,357.7C356.5,357.4 351.6,357.5 351.6,355.7Z" fill="#e6e6e6"/>
<path d="M360.5,365.6C361.1,364.3 366.3,363.0 369.4,363.6C372.5,364.2 376.3,367.0 379.3,369.5C382.3,372.0 385.7,376.1 387.2,378.4C388.7,380.7 389.5,382.9 388.2,383.4C386.9,383.9 382.1,382.4 379.3,381.4C376.5,380.4 373.7,379.0 371.4,377.4C369.1,375.8 367.3,373.5 365.5,371.5C363.7,369.5 359.9,366.9 360.5,365.6Z" fill="#e6e6e6"/>
<path d="M166.4,403.7C168.2,401.6 173.8,401.1 177.3,400.8C180.8,400.5 184.7,400.2 187.2,401.7C189.7,403.2 191.4,406.6 192.1,409.6C192.8,412.6 192.6,416.2 191.1,419.5C189.6,422.8 185.5,427.6 183.2,429.4C180.9,431.2 179.6,431.5 177.3,430.4C175.0,429.2 171.2,425.3 169.4,422.5C167.6,419.7 166.9,416.7 166.4,413.6C165.9,410.5 164.6,405.8 166.4,403.7Z" fill="#000"/>
<path d="M179.3,442.3C180.6,442.1 185.7,444.2 187.2,446.2C188.7,448.2 188.9,453.1 188.2,454.1C187.5,455.1 184.7,453.2 183.2,452.1C181.7,451.0 180.0,448.8 179.3,447.2C178.7,445.6 178.0,442.5 179.3,442.3Z" fill="#000"/>
<path d="M425.4,400.0C426.0,398.2 426.6,397.5 428.2,398.8C429.8,400.1 433.1,404.6 435.1,407.7C437.1,410.8 439.3,414.5 440.0,417.5C440.7,420.5 440.2,423.5 439.1,425.5C438.0,427.5 435.1,428.6 433.1,429.4C431.2,430.2 428.6,432.0 427.4,430.4C426.1,428.8 426.0,423.0 425.6,419.5C425.2,416.0 424.8,412.9 424.8,409.6C424.8,406.4 424.8,401.8 425.4,400.0Z" fill="#000"/>
<path d="M421.6,403.0C421.6,397.3 422.7,397.5 423.2,403.0C423.7,408.5 424.6,430.3 424.6,436.0C424.6,441.7 423.7,442.5 423.2,437.0C422.7,431.5 421.6,408.7 421.6,403.0Z" fill="#000"/>

<ellipse cx="72.4" cy="290.5" rx="7" ry="10" transform="rotate(12 72.4 290.5)" fill="#e8e8e8"/>
<ellipse cx="178.7" cy="177.8" rx="1.6" ry="2.6" transform="rotate(25 178.7 177.8)" fill="#e8e8e8"/>
<ellipse cx="351.6" cy="342" rx="7" ry="5.2" transform="rotate(-25 351.6 342)" fill="#e4e4e4"/>
<g fill="#8a95dc">
<circle cx="178.9" cy="213.6" r="2"/><circle cx="212.5" cy="210.6" r="2"/><circle cx="323.6" cy="196.8" r="2"/>
<path d="M337.5,207.5 Q347,213 357.5,213.5 Q358.5,215.5 357,217.8 Q346,218.5 337,212 Q336,209 337.5,207.5 Z"/>
<ellipse cx="179.9" cy="286" rx="2.4" ry="5"/>
<circle cx="388.2" cy="423.7" r="2.6"/>
<ellipse cx="353.6" cy="446.2" rx="6" ry="3.5" transform="rotate(20 353.6 446.2)"/>
<ellipse cx="416.8" cy="462" rx="9" ry="3" transform="rotate(10 416.8 462)"/><ellipse cx="248" cy="476" rx="2" ry="1.6"/><ellipse cx="264.5" cy="476" rx="2.2" ry="1.8"/>
</g>
</g></svg>
<!-- viewport overlays -->
<div class="a" style="left:67px;top:94px;width:326px;height:293.5px;border:1px dotted #e8e8e8;box-sizing:border-box;opacity:.85"></div>
<div class="a" style="left:384.5px;top:57px;width:33.5px;height:10px;background:#33330a;border:1px solid #d6d69a;box-sizing:border-box;"></div>
<div class="t" style="transform:scaleX(0.910);left:387px;top:57.8px;font-size:8.4px;color:#d0d860;">persp1</div>
<div class="a" style="left:411px;top:61.5px;width:0;height:0;border-left:2.5px solid transparent;border-right:2.5px solid transparent;border-top:3px solid #d8d870;"></div>
<div class="a" style="left:420px;top:57px;width:35px;height:10px;background:#33330a;border:1px solid #d6d69a;box-sizing:border-box;"></div>
<div class="t" style="transform:scaleX(0.896);left:422.5px;top:57.8px;font-size:8.4px;color:#d0d860;">no cam</div>
<div class="a" style="left:448.5px;top:61.5px;width:0;height:0;border-left:2.5px solid transparent;border-right:2.5px solid transparent;border-top:3px solid #d8d870;"></div>
<div class="t" style="transform:scaleX(0.866);left:209.5px;top:463.5px;font-size:8.4px;color:#f0f0f0;">Render Region Tool</div>
<div class="t" style="transform:scaleX(0.887);left:371.5px;top:462.5px;font-size:8.6px;color:#c4c87a;">Non-Commercial Edition</div>
<!-- left toolbar -->
<div class="a" style="left:0;top:53px;width:3.5px;height:424px;background:#0c0c0c;"></div>
<div class="a" style="left:3.5px;top:53px;width:17.5px;height:424px;background:#3b3b3b;"></div>
<div class="a" style="left:3.5px;top:54px;width:17.5px;height:4px;background:#5c5c5c;"></div>
<div class="gold" style="left:4.5px;top:62px;width:15.5px;height:16px;"></div>
<div class="a" style="left:4.5px;top:80px;width:15.5px;height:13.5px;background:#4d4d4d;"></div>
<div class="a" style="left:4.5px;top:95px;width:15.5px;height:13.5px;background:#4d4d4d;"></div>
<div class="gold" style="left:4.5px;top:291.5px;width:15.5px;height:15.5px;"></div>
<div class="t" style="left:0;top:459px;font-size:9px;color:#38c838;">y</div>
<!-- right toolbar -->
<div class="a" style="left:463px;top:53px;width:17px;height:424px;background:#3c3c3c;"></div>
<div class="a" style="left:463px;top:54px;width:17px;height:4px;background:#5a5a5a;"></div>
<div class="a" style="left:480px;top:0;width:4px;height:477px;background:#1e1e1e;"></div>
<div class="a" style="left:482px;top:15px;width:1px;height:462px;background:#555;"></div>
<div class="gold" style="left:463.7px;top:134.5px;width:14.6px;height:14.8px;"></div>
<div class="gold" style="left:463.7px;top:183px;width:14.6px;height:15.5px;"></div>
<div class="gold" style="left:463.7px;top:397px;width:14.6px;height:14px;"></div>
<div class="gold" style="left:463.7px;top:422px;width:14.6px;height:14px;"></div>
<div class="t" style="transform:scaleX(1.034);left:465.5px;top:384px;font-size:6.6px;color:#e4e4e4;">abc</div>
<div class="a" style="left:468.5px;top:467px;width:0;height:0;border-left:2.8px solid transparent;border-right:2.8px solid transparent;border-top:4.5px solid #aaa;"></div>
<!-- network pane -->
<div class="a" style="left:484px;top:53px;width:413px;height:424px;background:#3c3c3c;"></div>
<div class="a" style="left:897px;top:0;width:3px;height:13px;background:#4a4a4a;"></div><div class="a" style="left:897px;top:13px;width:3px;height:19px;background:#303030;"></div><div class="a" style="left:897px;top:32px;width:3px;height:474px;background:#030303;"></div>
<!-- nodes -->
<div class="a" style="left:558px;top:220px;width:5.5px;height:10.5px;background:#86d628;"></div>
<div class="a" style="left:563.5px;top:220px;width:15px;height:10.5px;background:#2a2a2a;"></div>
<div class="a" style="left:574px;top:216px;width:4.5px;height:3px;background:#aaa;"></div>
<div class="a" style="left:574px;top:230.5px;width:4.5px;height:3px;background:#aaa;"></div>
<!-- Grid (selected) -->
<div class="a" style="left:532px;top:252.5px;width:11px;height:3px;background:#a8a8a8;"></div>
<div class="a" style="left:532px;top:267.5px;width:11px;height:3px;background:#a8a8a8;"></div>
<div class="a" style="left:515px;top:255px;width:45.5px;height:13px;border:1px solid #f0f0f0;border-radius:2px;box-sizing:border-box;background:#3a3a3a;"></div>
<div class="a" style="left:517px;top:257px;width:5.5px;height:9px;background:#8ed62a;"></div>
<div class="a" style="left:523px;top:257px;width:31px;height:9px;background:#8c1eb2;"></div>
<div class="a" style="left:554.5px;top:257px;width:4.5px;height:9px;background:#2a8ad8;"></div>
<div class="lbl" style="transform:scaleX(0.954);left:562px;top:257.2px;">Grid</div>
<!-- Grid_FluidSource -->
<div class="a" style="left:614px;top:261.5px;width:9.5px;height:3px;background:#a8a8a8;"></div>
<div class="a" style="left:614px;top:276px;width:9.5px;height:3px;background:#a8a8a8;"></div>
<div class="a" style="left:597.5px;top:265px;width:5px;height:10.8px;background:#80d422;"></div>
<div class="a" style="left:603px;top:265px;width:32.5px;height:10.8px;background:#ecec84;"></div>
<div class="a" style="left:636px;top:265px;width:3.8px;height:10.8px;background:#ecebc4;"></div>
<div class="lbl" style="transform:scaleX(0.950);left:643px;top:266.2px;">Grid_FluidSource</div>
<!-- Grid_FluidSim -->
<div class="a" style="left:615px;top:291px;width:10px;height:3px;background:#a8a8a8;"></div>
<div class="a" style="left:615px;top:305.3px;width:10px;height:3px;background:#a8a8a8;"></div>
<div class="a" style="left:599px;top:294.2px;width:5px;height:10.8px;background:#80d422;"></div>
<div class="a" style="left:604.8px;top:294.2px;width:31.5px;height:10.8px;background:#e9d23e;"></div>
<div class="a" style="left:637px;top:294.2px;width:4.3px;height:10.8px;background:#ebe2a2;"></div>
<div class="lbl" style="transform:scaleX(0.948);left:644px;top:295.3px;">Grid_FluidSim</div>
<!-- Grid_Fluid -->
<div class="a" style="left:534px;top:308.5px;width:10px;height:3px;background:#a8a8a8;"></div>
<div class="a" style="left:534px;top:323px;width:10px;height:3px;background:#a8a8a8;"></div>
<div class="a" style="left:518px;top:311.8px;width:5px;height:11px;background:#80d422;"></div>
<div class="a" style="left:523.8px;top:311.8px;width:31px;height:11px;background:#8c1eb2;"></div>
<div class="a" style="left:555.3px;top:311.8px;width:5px;height:11px;background:#2a8ad8;"></div>
<div class="lbl" style="transform:scaleX(0.933);left:563px;top:313px;">Grid_Fluid</div>
<!-- Grid_WetMapPntsMaker -->
<div class="a" style="left:587px;top:335.5px;width:10px;height:3px;background:#a8a8a8;"></div>
<div class="a" style="left:587px;top:350px;width:10px;height:3px;background:#a8a8a8;"></div>
<div class="a" style="left:571px;top:338.7px;width:5px;height:11px;background:#80d422;"></div>
<div class="a" style="left:576.8px;top:338.7px;width:31.5px;height:11px;background:#b2aaea;"></div>
<div class="a" style="left:609px;top:338.7px;width:4px;height:11px;background:#cfcff4;"></div>
<div class="lbl" style="transform:scaleX(0.947);left:615.5px;top:339.8px;">Grid_WetMapPntsMaker</div>
<!-- watermark -->
<div class="t" style="transform:scaleX(0.971);left:775px;top:461.5px;font-size:10.6px;font-weight:bold;color:#4b4b4b;">Non-Commercial Edition</div>
<!-- palette -->
<div class="a" style="left:484px;top:410px;width:66px;height:64px;background:#000;" id="pal"></div>
<div class="a" style="left:484.6px;top:410.8px;width:10.4px;height:9.5px;background:#e00010;"></div>
<div class="a" style="left:495.9px;top:410.8px;width:10.4px;height:9.5px;background:#e00818;"></div>
<div class="a" style="left:507.2px;top:410.8px;width:10.4px;height:9.5px;background:#e80010;"></div>
<div class="a" style="left:518.8px;top:410.8px;width:10.4px;height:9.5px;background:#ffc0c8;"></div>
<div class="a" style="left:530.2px;top:410.8px;width:9.9px;height:9.5px;background:#ffd8dc;"></div>
<div class="a" style="left:541.5px;top:410.8px;width:7.7px;height:9.5px;background:#ffe8e8;"></div>
<div class="a" style="left:484.6px;top:421.5px;width:10.4px;height:9.5px;background:#f0d0a0;"></div>
<div class="a" style="left:495.9px;top:421.5px;width:10.4px;height:9.5px;background:#f0e000;"></div>
<div class="a" style="left:507.2px;top:421.5px;width:10.4px;height:9.5px;background:#f8f000;"></div>
<div class="a" style="left:518.8px;top:421.5px;width:10.4px;height:9.5px;background:#ffffc0;"></div>
<div class="a" style="left:530.2px;top:421.5px;width:9.9px;height:9.5px;background:#ffffe0;"></div>
<div class="a" style="left:541.5px;top:421.5px;width:7.7px;height:9.5px;background:#fffff0;"></div>
<div class="a" style="left:484.6px;top:432.1px;width:10.4px;height:9.5px;background:#00c800;"></div>
<div class="a" style="left:495.9px;top:432.1px;width:10.4px;height:9.5px;background:#10d010;"></div>
<div class="a" style="left:507.2px;top:432.1px;width:10.4px;height:9.5px;background:#18e018;"></div>
<div class="a" style="left:518.8px;top:432.1px;width:10.4px;height:9.5px;background:#c8ffc8;"></div>
<div class="a" style="left:530.2px;top:432.1px;width:9.9px;height:9.5px;background:#e0ffe0;"></div>
<div class="a" style="left:541.5px;top:432.1px;width:7.7px;height:9.5px;background:#f0fff0;"></div>
<div class="a" style="left:484.6px;top:442.7px;width:10.4px;height:9.5px;background:#10a8f0;"></div>
<div class="a" style="left:495.9px;top:442.7px;width:10.4px;height:9.5px;background:#1098f8;"></div>
<div class="a" style="left:507.2px;top:442.7px;width:10.4px;height:9.5px;background:#18b8f8;"></div>
<div class="a" style="left:518.8px;top:442.7px;width:10.4px;height:9.5px;background:#20e0f8;"></div>
<div class="a" style="left:530.2px;top:442.7px;width:9.9px;height:9.5px;background:#10f0f8;"></div>
<div class="a" style="left:541.5px;top:442.7px;width:7.7px;height:9.5px;background:#c0ffff;"></div>
<div class="a" style="left:484.6px;top:453.3px;width:10.4px;height:9.5px;background:#a000d0;"></div>
<div class="a" style="left:495.9px;top:453.3px;width:10.4px;height:9.5px;background:#c000e0;"></div>
<div class="a" style="left:507.2px;top:453.3px;width:10.4px;height:9.5px;background:#c890e8;"></div>
<div class="a" style="left:518.8px;top:453.3px;width:10.4px;height:9.5px;background:#e0b0ff;"></div>
<div class="a" style="left:530.2px;top:453.3px;width:9.9px;height:9.5px;background:#e0e0ff;"></div>
<div class="a" style="left:541.5px;top:453.3px;width:7.7px;height:9.5px;background:#f0f0ff;"></div>
<div class="a" style="left:484.6px;top:463.7px;width:10.4px;height:9.5px;background:#000000;"></div>
<div class="a" style="left:495.9px;top:463.7px;width:10.4px;height:9.5px;background:#c8c8c8;"></div>
<div class="a" style="left:507.2px;top:463.7px;width:10.4px;height:9.5px;background:#d8d8d8;"></div>
<div class="a" style="left:518.8px;top:463.7px;width:10.4px;height:9.5px;background:#e8e8e8;"></div>
<div class="a" style="left:530.2px;top:463.7px;width:9.9px;height:9.5px;background:#f0f0f0;"></div>
<div class="a" style="left:541.5px;top:463.7px;width:7.7px;height:9.5px;background:#ffffff;"></div>
<!-- param panel -->
<div class="a" style="left:577.5px;top:53px;width:320px;height:182.5px;background:#262626;"></div>
<div class="a" style="left:579px;top:53px;width:314px;height:181px;background:#494949;"></div>
<div class="a" style="left:893px;top:53px;width:4px;height:181px;background:#555;"></div>
<div class="a" style="left:893.5px;top:101px;width:3px;height:20px;background:#727272;"></div>
<div class="a" style="left:897px;top:195px;width:3px;height:5.5px;background:#8878c8;"></div><div class="a" style="left:894px;top:222px;width:2.5px;height:2px;background:#aaa;"></div><div class="a" style="left:894px;top:229px;width:2.5px;height:2px;background:#aaa;"></div>
<div class="t" style="transform:scaleX(0.869);left:598px;top:57px;font-size:8.9px;font-weight:bold;color:#f4f4f4;">Geometry</div>
<div class="fld" style="left:638px;top:56.5px;width:201.5px;height:10.2px;"></div>
<div class="t mono" style="transform:scaleX(0.775);left:640.3px;top:58.2px;font-size:8.6px;">Grid</div>
<div class="a" style="left:580px;top:70px;width:313px;height:1px;background:#3a3a3a;"></div>
<!-- tabs -->
<div class="a" style="left:582px;top:71.6px;width:39px;height:10.4px;background:#555;border:1px solid #626262;border-bottom:none;box-sizing:border-box;"></div>
<div class="a" style="left:624.8px;top:71.6px;width:37px;height:10.4px;background:#5c5c5c;border:1px solid #6a6a6a;border-bottom:none;box-sizing:border-box;"></div>
<div class="a" style="left:663px;top:71.6px;width:34.5px;height:10.4px;background:#555;border:1px solid #626262;border-bottom:none;box-sizing:border-box;"></div>
<div class="a" style="left:698.5px;top:71.6px;width:23.5px;height:10.4px;background:#555;border:1px solid #626262;border-bottom:none;box-sizing:border-box;"></div>
<div class="lbl" style="transform:scaleX(0.860);left:586.5px;top:73px;font-size:8.6px;color:#e4e4e4;">Transform</div>
<div class="lbl" style="transform:scaleX(0.893);left:629.5px;top:73px;font-size:8.6px;color:#e4e4e4;">Material</div>
<div class="lbl" style="transform:scaleX(0.851);left:667.5px;top:73px;font-size:8.6px;color:#e4e4e4;">Render</div>
<div class="lbl" style="transform:scaleX(0.804);left:703px;top:73px;font-size:8.6px;color:#e4e4e4;">Misc</div>
<div class="a" style="left:582px;top:82px;width:311px;height:152px;background:#4b4b4b;border:1px solid #343434;border-bottom:none;box-sizing:border-box;"></div>
<div class="lbl" style="transform:scaleX(0.899);left:635px;top:89px;font-size:8.6px;color:#d0d0d0;">Material</div>
<div class="fld" style="left:673px;top:88px;width:166px;height:10.4px;"></div>
<div class="t mono" style="transform:scaleX(0.795);left:674.8px;top:89.7px;font-size:8.6px;">/shop/Grid_WetShader</div>
<div class="a" style="left:877px;top:86px;width:12.5px;height:13px;background:#383838;border:1px solid #303030;box-sizing:border-box;"></div>
<div class="a" style="left:880.7px;top:91px;width:0;height:0;border-left:2.6px solid transparent;border-right:2.6px solid transparent;border-top:3.6px solid #999;"></div>

<!-- timeline -->
<div class="a" style="left:0;top:476px;width:900px;height:30px;background:#3a3a3a;"></div>
<div class="a" style="left:0;top:476px;width:900px;height:2px;background:#5c5c5c;"></div>
<div class="a" style="left:3.5px;top:477.5px;width:4px;height:20px;background:#4a4a4a;"></div>
<div class="a" style="left:0;top:477.5px;width:3.5px;height:28.5px;background:#0a0a12;"></div>
<div class="btn" style="left:11.5px;top:483px;width:14.5px;height:14.5px;background:#555;"></div>
<div class="btn" style="left:27.5px;top:483px;width:13.5px;height:14.5px;background:#555;"></div>
<div class="btn" style="left:42.5px;top:483px;width:14px;height:14.5px;background:#555;"></div>
<div class="btn" style="left:74px;top:483px;width:14px;height:14.5px;background:#555;"></div>
<div class="btn" style="left:89.5px;top:483px;width:13.5px;height:14.5px;background:#555;"></div>
<div class="gold" style="left:58px;top:482.5px;width:14.5px;height:15.5px;"></div>
<div class="a" style="left:108px;top:485px;width:31px;height:11px;background:#222;"></div>
<div class="t mono" style="transform:scaleX(0.767);left:111px;top:487.3px;font-size:7.6px;font-weight:bold;">79</div>
<div class="btn" style="left:140px;top:485px;width:9px;height:11px;background:#555;"></div>
<div class="btn" style="left:150px;top:485px;width:9.5px;height:11px;background:#555;"></div>
<div class="t" style="left:142.6px;top:486px;font-size:8px;color:#ccc;">-</div>
<div class="t" style="left:152.3px;top:486.3px;font-size:8px;color:#ccc;">+</div>
<div class="a" style="left:165.5px;top:485px;width:28px;height:11px;background:#222;"></div>
<div class="t mono" style="left:168.3px;top:487.3px;font-size:7.6px;font-weight:bold;transform:scaleX(.78);">1</div>
<div class="a" style="left:193px;top:478px;width:604.5px;height:19.5px;background:#383838;"></div>
<div class="a" style="left:193px;top:478.2px;width:604.5px;height:1.1px;background:#a0a0a0;"></div>
<div class="a" style="left:193px;top:477.5px;width:1px;height:20px;background:#999;"></div>
<div class="a" style="left:796.5px;top:477.5px;width:1.2px;height:20px;background:#ddd;"></div>
<div class="a" style="left:194px;top:487.6px;width:603px;height:1px;background:#b8b8b8;"></div>
<div class="a" style="left:193.3px;top:484.5px;width:1.1px;height:6.5px;background:#f0f0f0;"></div>
<div class="t" style="left:194.5px;top:479.6px;font-size:6.6px;color:#f0f0f0;">1</div>
<div class="a" style="left:205.9px;top:485.5px;width:1px;height:4.5px;background:#c8c8c8;"></div>
<div class="a" style="left:221.0px;top:485.5px;width:1px;height:4.5px;background:#c8c8c8;"></div>
<div class="a" style="left:236.1px;top:485.5px;width:1px;height:4.5px;background:#c8c8c8;"></div>
<div class="a" style="left:251.2px;top:484.5px;width:1.1px;height:6.5px;background:#f0f0f0;"></div>
<div class="t" style="transform:scaleX(0.926);left:252.4px;top:479.6px;font-size:6.6px;color:#f0f0f0;">24</div>
<div class="a" style="left:266.3px;top:485.5px;width:1px;height:4.5px;background:#c8c8c8;"></div>
<div class="a" style="left:281.4px;top:485.5px;width:1px;height:4.5px;background:#c8c8c8;"></div>
<div class="a" style="left:296.5px;top:485.5px;width:1px;height:4.5px;background:#c8c8c8;"></div>
<div class="a" style="left:311.6px;top:484.5px;width:1.1px;height:6.5px;background:#f0f0f0;"></div>
<div class="t" style="transform:scaleX(0.926);left:312.8px;top:479.6px;font-size:6.6px;color:#f0f0f0;">48</div>
<div class="a" style="left:326.7px;top:485.5px;width:1px;height:4.5px;background:#c8c8c8;"></div>
<div class="a" style="left:341.8px;top:485.5px;width:1px;height:4.5px;background:#c8c8c8;"></div>
<div class="a" style="left:356.9px;top:485.5px;width:1px;height:4.5px;background:#c8c8c8;"></div>
<div class="a" style="left:372.0px;top:484.5px;width:1.1px;height:6.5px;background:#f0f0f0;"></div>
<div class="t" style="transform:scaleX(0.926);left:373.2px;top:479.6px;font-size:6.6px;color:#f0f0f0;">72</div>
<div class="a" style="left:387.1px;top:485.5px;width:1px;height:4.5px;background:#c8c8c8;"></div>
<div class="a" style="left:402.2px;top:485.5px;width:1px;height:4.5px;background:#c8c8c8;"></div>
<div class="a" style="left:417.3px;top:485.5px;width:1px;height:4.5px;background:#c8c8c8;"></div>
<div class="a" style="left:432.4px;top:484.5px;width:1.1px;height:6.5px;background:#f0f0f0;"></div>
<div class="t" style="transform:scaleX(0.926);left:433.6px;top:479.6px;font-size:6.6px;color:#f0f0f0;">96</div>
<div class="a" style="left:447.5px;top:485.5px;width:1px;height:4.5px;background:#c8c8c8;"></div>
<div class="a" style="left:462.6px;top:485.5px;width:1px;height:4.5px;background:#c8c8c8;"></div>
<div class="a" style="left:477.7px;top:485.5px;width:1px;height:4.5px;background:#c8c8c8;"></div>
<div class="a" style="left:492.8px;top:484.5px;width:1.1px;height:6.5px;background:#f0f0f0;"></div>
<div class="t" style="transform:scaleX(1.026);left:494.0px;top:479.6px;font-size:6.6px;color:#f0f0f0;">120</div>
<div class="a" style="left:507.9px;top:485.5px;width:1px;height:4.5px;background:#c8c8c8;"></div>
<div class="a" style="left:523.1px;top:485.5px;width:1px;height:4.5px;background:#c8c8c8;"></div>
<div class="a" style="left:538.2px;top:485.5px;width:1px;height:4.5px;background:#c8c8c8;"></div>
<div class="a" style="left:553.3px;top:484.5px;width:1.1px;height:6.5px;background:#f0f0f0;"></div>
<div class="t" style="transform:scaleX(1.026);left:554.5px;top:479.6px;font-size:6.6px;color:#f0f0f0;">144</div>
<div class="a" style="left:568.4px;top:485.5px;width:1px;height:4.5px;background:#c8c8c8;"></div>
<div class="a" style="left:583.5px;top:485.5px;width:1px;height:4.5px;background:#c8c8c8;"></div>
<div class="a" style="left:598.6px;top:485.5px;width:1px;height:4.5px;background:#c8c8c8;"></div>
<div class="a" style="left:613.7px;top:484.5px;width:1.1px;height:6.5px;background:#f0f0f0;"></div>
<div class="t" style="transform:scaleX(1.026);left:614.9px;top:479.6px;font-size:6.6px;color:#f0f0f0;">168</div>
<div class="a" style="left:628.8px;top:485.5px;width:1px;height:4.5px;background:#c8c8c8;"></div>
<div class="a" style="left:643.9px;top:485.5px;width:1px;height:4.5px;background:#c8c8c8;"></div>
<div class="a" style="left:659.0px;top:485.5px;width:1px;height:4.5px;background:#c8c8c8;"></div>
<div class="a" style="left:674.1px;top:484.5px;width:1.1px;height:6.5px;background:#f0f0f0;"></div>
<div class="t" style="transform:scaleX(1.026);left:675.3px;top:479.6px;font-size:6.6px;color:#f0f0f0;">192</div>
<div class="a" style="left:689.2px;top:485.5px;width:1px;height:4.5px;background:#c8c8c8;"></div>
<div class="a" style="left:704.3px;top:485.5px;width:1px;height:4.5px;background:#c8c8c8;"></div>
<div class="a" style="left:719.4px;top:485.5px;width:1px;height:4.5px;background:#c8c8c8;"></div>
<div class="a" style="left:734.5px;top:484.5px;width:1.1px;height:6.5px;background:#f0f0f0;"></div>
<div class="t" style="transform:scaleX(1.026);left:735.7px;top:479.6px;font-size:6.6px;color:#f0f0f0;">216</div>
<div class="a" style="left:749.6px;top:485.5px;width:1px;height:4.5px;background:#c8c8c8;"></div>
<div class="a" style="left:764.7px;top:485.5px;width:1px;height:4.5px;background:#c8c8c8;"></div>
<div class="a" style="left:779.8px;top:485.5px;width:1px;height:4.5px;background:#c8c8c8;"></div>
<div class="a" style="left:794.9px;top:484.5px;width:1.1px;height:6.5px;background:#f0f0f0;"></div>
<div class="a" style="left:193px;top:498px;width:604.5px;height:3.5px;background:#585858;"></div>
<div class="a" style="left:205px;top:498px;width:1px;height:3.5px;background:#333;"></div>
<div class="a" style="left:389.4px;top:490px;width:1.2px;height:10px;background:#111;"></div>
<div class="a" style="left:382.1px;top:479px;width:15.5px;height:11.5px;background:#0a0a0a;border:1px solid #f0f0f0;box-sizing:border-box;border-radius:1px;"></div>
<div class="t" style="transform:scaleX(1.153);left:384.3px;top:480.8px;font-size:8.2px;font-weight:bold;color:#fff;">79</div>
<div class="a" style="left:800px;top:485px;width:26px;height:11px;background:#222;"></div>
<div class="t mono" style="transform:scaleX(0.731);left:802px;top:487.3px;font-size:7.6px;font-weight:bold;">240</div>
<div class="btn" style="left:831px;top:483.5px;width:14px;height:14px;background:#555;"></div>
<div class="gold" style="left:846px;top:483px;width:14.5px;height:15px;"></div>
<div class="btn" style="left:861px;top:483.5px;width:13px;height:14px;background:#555;"></div>
<div class="btn" style="left:875px;top:483.5px;width:11px;height:14px;background:#555;"></div>
<div class="btn" style="left:887px;top:483.5px;width:10px;height:14px;background:#555;"></div>
<div class="a" style="left:897px;top:477px;width:3px;height:29px;background:#000;"></div>
<div class="a" style="left:0;top:501.5px;width:900px;height:4.5px;background:#242424;"></div>
<div class="a" style="left:23px;top:504px;width:12.5px;height:2px;background:#c9a033;"></div>
<div class="a" style="left:40px;top:504px;width:14px;height:2px;background:#555;"></div>
<div class="a" style="left:58px;top:504px;width:14px;height:2px;background:#555;"></div>
<div class="a" style="left:875px;top:504px;width:11px;height:2px;background:#c9a033;"></div>
<div class="a" style="left:855px;top:504px;width:14px;height:2px;background:#555;"></div>
<div class="a" style="left:3px;top:500.5px;width:4px;height:5.5px;background:#444;"></div>
<div class="a" style="left:85px;top:503.5px;width:8px;height:2.5px;background:#999;opacity:.55;"></div>
<div class="a" style="left:120px;top:503.5px;width:8px;height:2.5px;background:#999;opacity:.55;"></div>
<div class="a" style="left:150px;top:503.5px;width:8px;height:2.5px;background:#999;opacity:.55;"></div>
<div class="a" style="left:365px;top:503.5px;width:8px;height:2.5px;background:#999;opacity:.55;"></div>
<div class="a" style="left:383px;top:503.5px;width:8px;height:2.5px;background:#999;opacity:.55;"></div>
<div class="a" style="left:430px;top:503.5px;width:8px;height:2.5px;background:#999;opacity:.55;"></div>
<div class="a" style="left:495px;top:503.5px;width:8px;height:2.5px;background:#999;opacity:.55;"></div>
<div class="a" style="left:560px;top:503.5px;width:8px;height:2.5px;background:#999;opacity:.55;"></div>
<div class="a" style="left:625px;top:503.5px;width:8px;height:2.5px;background:#999;opacity:.55;"></div>
<div class="a" style="left:690px;top:503.5px;width:8px;height:2.5px;background:#999;opacity:.55;"></div>
<div class="a" style="left:755px;top:503.5px;width:8px;height:2.5px;background:#999;opacity:.55;"></div>
<div class="a" style="left:820px;top:503.5px;width:8px;height:2.5px;background:#999;opacity:.55;"></div>
<!-- icon overlay -->
<svg class="a" style="left:0;top:0" width="900" height="506" viewBox="0 0 900 506"><!-- path bar arrows left pane -->
<g fill="#e4e4e4">
<path d="M7,22.5 L11.5,18.5 L11.5,21 L15.5,21 L15.5,27 L13,27 L13,24 L11.5,24 L11.5,26.5 Z"/>
<path d="M14,26.5 L17,26.5 L15.5,29 Z" fill="#bbb"/>
<path d="M31,23 L26.5,19 L26.5,21.3 L23,21.3 L23,24.7 L26.5,24.7 L26.5,27 Z" fill="#8a8a8a"/>
<path d="M488.5,22.5 L493,18.5 L493,21 L497,21 L497,27 L494.5,27 L494.5,24 L493,24 L493,26.5 Z"/>
<path d="M495.5,26.5 L498.5,26.5 L497,29 Z" fill="#bbb"/>
<path d="M511.5,23 L507,19 L507,21.3 L503.5,21.3 L503.5,24.7 L507,24.7 L507,27 Z" fill="#8a8a8a"/>
</g>
<!-- obj icons in path field -->
<g fill="#d8d8d8"><rect x="42.5" y="20.5" width="2.5" height="2.5"/><rect x="43" y="24" width="6.5" height="3.2"/><rect x="46.5" y="21" width="2" height="1.5" fill="#999"/>
<rect x="523.5" y="20.5" width="2.5" height="2.5"/><rect x="524" y="24" width="6.5" height="3.2"/><rect x="527.5" y="21" width="2" height="1.5" fill="#999"/></g>
<!-- dropdown arrows on path fields -->
<path d="M384.5,22 L389.5,22 L387,25.5 Z" fill="#aaa"/><path d="M836.5,22 L841.5,22 L839,25.5 Z" fill="#aaa"/>
<!-- pin icons -->
<g fill="#e8e8e8"><path d="M402,22.5 L405,22 L406,20 L410,20 L410,26 L406,26 L405,24 L402,23.5 Z"/><path d="M855,22.5 L858,22 L859,20 L863,20 L863,26 L859,26 L858,24 L855,23.5 Z"/></g>
<!-- concentric circles -->
<g fill="none" stroke="#7d9ed0" stroke-width="1"><circle cx="420.5" cy="24" r="5"/><circle cx="420.5" cy="24" r="3"/><circle cx="420.5" cy="24" r="1" fill="#7d9ed0"/>
<circle cx="872.5" cy="24" r="5"/><circle cx="872.5" cy="24" r="3"/><circle cx="872.5" cy="24" r="1" fill="#7d9ed0"/></g>
<!-- cube -->
<path d="M435.5,21.5 L440,19.5 L444.5,21.5 L444.5,27 L440,29 L435.5,27 Z" fill="#b8c0c8"/><path d="M435.5,21.5 L440,23.5 L440,29 L435.5,27 Z" fill="#8c949c"/><path d="M435.5,21.5 L440,19.5 L444.5,21.5 L440,23.5Z" fill="#e8eef4"/>
<path d="M443,28 L447,28 L445,30.5 Z" fill="#bbb"/>
<!-- blue sphere -->
<circle cx="457" cy="24" r="3.3" fill="#3a78d8"/><circle cx="456" cy="23" r="1.3" fill="#9cc4ff"/><path d="M458,28.5 L462,28.5 L460,31 Z" fill="#bbb"/>
<!-- white square -->
<rect x="467" y="20" width="8" height="8" fill="#eee"/><path d="M473.5,28.5 L477.5,28.5 L475.5,31 Z" fill="#bbb"/>
<!-- gear right top -->
<g fill="#f0f0f0"><circle cx="893.5" cy="24" r="3"/><g stroke="#f0f0f0" stroke-width="1.6"><path d="M893.5,19 V29 M888.5,24 H898.5 M890,20.5 L897,27.5 M897,20.5 L890,27.5"/></g><circle cx="893.5" cy="24" r="1.2" fill="#464646"/></g>
<!-- render region icon -->
<circle cx="15.5" cy="42" r="4.3" fill="none" stroke="#e0e0e0" stroke-width="1.1"/><circle cx="16.3" cy="42.7" r="1.8" fill="#a44"/><path d="M16.5,44 L21,47 L19,47.3 L19.8,49.8 L18.6,50 L17.8,47.7 L16.5,49 Z" fill="#ddd"/>
<!-- refresh -->
<g fill="none" stroke="#dcdcdc" stroke-width="1.5"><path d="M148.2,42 A3.6,3.6 0 0 1 154.5,40.5"/><path d="M155.2,44.5 A3.6,3.6 0 0 1 148.8,46"/></g><path d="M153,38.3 L156.5,38.8 L155.6,42.2 Z" fill="#dcdcdc"/><path d="M150.5,48.3 L147,47.8 L147.9,44.4 Z" fill="#dcdcdc"/>
<!-- window w/ cursor -->
<rect x="279.5" y="39" width="8" height="7" fill="#e8e8e8"/><rect x="279.5" y="39" width="8" height="1.8" fill="#999"/><path d="M284.5,42.5 L289,46 L286.8,46.3 L287.5,48.5 L286.3,48.8 L285.5,46.8 L284.5,48 Z" fill="#fff" stroke="#222" stroke-width=".5"/>
<!-- checks -->
<g fill="none" stroke="#fff" stroke-width="1.8" stroke-linecap="round"><path d="M296.6,43.5 L298.5,45.8 L301.8,40.2"/><path d="M392.6,43.5 L394.5,45.8 L397.8,40.2"/></g>
<!-- list icon + help -->
<g fill="#c8d4f0"><rect x="452" y="38.5" width="2" height="2"/><rect x="452" y="42" width="2" height="2"/><rect x="452" y="45.5" width="2" height="2"/><rect x="455" y="43" width="5" height="1.2" fill="#e8e8e8"/><rect x="455" y="46.5" width="5" height="1.2" fill="#e8e8e8"/><rect x="456" y="39.5" width="3" height="1.2" fill="#6aa0f0"/></g><path d="M458.5,48.5 L462.5,48.5 L460.5,51 Z" fill="#bbb"/>
<circle cx="471" cy="42.8" r="4.5" fill="#2a2a2a" stroke="#e0e0e0" stroke-width="1"/><text x="471" y="45.3" font-size="6.5" font-weight="bold" fill="#eee" text-anchor="middle" font-family="Liberation Sans, sans-serif">?</text>
<!-- network toolbar icons -->
<g stroke="#e8e8e8" stroke-width="1" fill="none"><path d="M496.5,38.5 V47 M496.5,41 H501.5 M496.5,44 H501.5 M496.5,47 H501.5"/></g><rect x="495.5" y="37.5" width="2" height="2" fill="#e8e8e8"/>
<rect x="509.5" y="38" width="8.5" height="9" fill="#ececec"/><path d="M509.5,41 H518 M509.5,44 H518" stroke="#999" stroke-width=".7"/>
<rect x="524" y="38" width="10" height="9.5" fill="#8a8a8a"/><rect x="524" y="42" width="6" height="5.5" fill="#eee"/><rect x="526" y="43.5" width="2.5" height="3" fill="#555"/>
<rect x="538" y="35.5" width="14" height="14.5" fill="#c9a033" stroke="#8f6f1c" stroke-width="1"/><rect x="541" y="38.5" width="8" height="9" fill="#f0f0e8"/><g><rect x="542" y="39.5" width="2" height="1.6" fill="#d22"/><rect x="542" y="42.2" width="2" height="1.6" fill="#2a2"/><rect x="542" y="44.9" width="2" height="1.6" fill="#22c"/><rect x="545" y="39.5" width="3" height="1.6" fill="#dc2"/><rect x="545" y="42.2" width="3" height="1.6" fill="#999"/><rect x="545" y="44.9" width="3" height="1.6" fill="#555"/></g>
<rect x="561.5" y="39" width="8.5" height="8" fill="#9a9a9a"/><rect x="562.5" y="40" width="3" height="2.5" fill="#f0f0f0"/><rect x="565.5" y="43.5" width="3.5" height="2.5" fill="#f0f0f0"/><path d="M564,42.5 V44.7 H565.5" stroke="#222" stroke-width=".7" fill="none"/>
<rect x="576" y="38.5" width="9" height="8.5" fill="#e6d848"/><path d="M578,40.5 H583 M578,42.5 H582" stroke="#443" stroke-width=".9"/><path d="M582,47 L585,44 L585,47 Z" fill="#a89820"/>
<path d="M592.5,40.5 Q596.7,36.5 601,40.5 L601,42 L592.5,42 Z" fill="#f0a040"/><rect x="593" y="42.5" width="7.5" height="4.5" fill="#e88c28"/><rect x="595" y="43.5" width="3.5" height="1.2" fill="#fbd9a0"/>
<!-- right icons in network toolbar -->
<g fill="#e8e8e8"><rect x="778.5" y="38" width="1.3" height="3"/><rect x="778.5" y="45" width="1.3" height="3"/><rect x="777" y="42.3" width="4.3" height="1.3"/>
<rect x="790.5" y="42.2" width="2" height="2"/><rect x="795.5" y="42.2" width="2" height="2"/>
<path d="M805.5,39.5 H809.5 V38 H810.8 V48 H809.5 V40.8 H805.5 Z"/><rect x="811" y="45.5" width="3" height="1.3"/></g>
<g fill="#7fa0d8"><rect x="820.5" y="39.5" width="6" height="1.5"/><rect x="823" y="42.5" width="7" height="1.5"/><rect x="821" y="45.5" width="8" height="1.5"/></g><rect x="822" y="41" width="5" height="1" fill="#ddd"/>
<g stroke="#d8dce8" stroke-width="1.1"><path d="M839,38.5 V48 M842.5,38.5 V48 M836,41.5 H845.5 M836,45 H845.5"/></g>
<g stroke="#6c8ccc" stroke-width="1.1"><path d="M853.5,38.5 V48 M856.5,38.5 V48 M859.5,38.5 V48 M851,40.5 H862 M851,43.3 H862 M851,46 H862"/></g>
<circle cx="876.5" cy="41.5" r="3.3" fill="none" stroke="#f0f0f0" stroke-width="1.3"/><path d="M879,44 L882.3,47.6" stroke="#f0f0f0" stroke-width="1.7"/>
<rect x="888.5" y="38" width="8.5" height="9.5" fill="#f0f0f0"/><path d="M890,42.5 Q893,39.5 896,42.5 Q893,45.5 890,42.5Z" fill="#222"/>
<!-- param header icons -->
<circle cx="588" cy="61" r="2.2" fill="#e8a020"/><circle cx="591.5" cy="62.5" r="2.3" fill="#d03030"/><circle cx="589" cy="64" r="2" fill="#e8e8e8"/><rect x="586" y="57.5" width="2.5" height="3.5" fill="#4a78d8"/><path d="M590.5,66 L594.5,66 L592.5,68.5Z" fill="#bbb"/>
<g fill="#f0f0f0"><circle cx="848" cy="61" r="2.8"/><g stroke="#f0f0f0" stroke-width="1.5"><path d="M848,56.3 V65.7 M843.3,61 H852.7 M844.7,57.7 L851.3,64.3 M851.3,57.7 L844.7,64.3"/></g><circle cx="848" cy="61" r="1.1" fill="#494949"/><path d="M850.5,65.5 L854.5,65.5 L852.5,68Z" fill="#bbb"/></g>
<g stroke="#e8e8e8" stroke-width="1.6" fill="none"><path d="M860.5,57 V65 M866,57 V65 M860.5,61 H866"/></g><path d="M859,65 H868" stroke="#6c8ccc" stroke-width="1.2"/><path d="M866,65.8 L870,65.8 L868,68.3Z" fill="#bbb"/>
<circle cx="878.5" cy="61" r="4" fill="none" stroke="#f0f0f0" stroke-width="1"/><text x="878.5" y="63.6" font-size="6.5" font-weight="bold" font-style="italic" fill="#f0f0f0" text-anchor="middle" font-family="Liberation Serif, serif">i</text>
<circle cx="893.2" cy="61" r="4" fill="none" stroke="#f0f0f0" stroke-width="1"/><text x="893.2" y="63.5" font-size="6.3" font-weight="bold" fill="#f0f0f0" text-anchor="middle" font-family="Liberation Sans, sans-serif">?</text>
<!-- material row icons -->
<path d="M844.5,94.5 Q846,90.5 849.5,91.5 L849.5,90 L852.5,93 L849.5,96 L849.5,94 Q847,93.3 846,95.5 Z" fill="#f0f0f0"/>
<rect x="859" y="89.5" width="8" height="3.5" fill="#f0f0f0"/><path d="M863,93 V95.5 H860.5" stroke="#f0f0f0" stroke-width="1" fill="none"/><path d="M863.5,93.5 L868,96.5 L866,97 L866.8,99 L865.6,99.3 L865,97.5 L863.8,98.5Z" fill="#fff"/>
<!-- node icons -->
<circle cx="536.5" cy="261" r="1.9" fill="#e8a0a0"/><circle cx="538.5" cy="262.5" r="1.9" fill="#f4e0c0"/><circle cx="536" cy="259.5" r="1.2" fill="#b8b8f0"/>
<circle cx="617.5" cy="270" r="2" fill="#c8c8c8"/><circle cx="620" cy="271" r="1.8" fill="#b89030"/>
<path d="M618.5,302 L620.5,296.5 L622,297 L621,302.5 Z" fill="#f0e0a0" stroke="#a89040" stroke-width=".5"/>
<circle cx="537.5" cy="316.7" r="1.9" fill="#e8a0a0"/><circle cx="539.5" cy="318.2" r="1.9" fill="#f4e0c0"/><circle cx="537" cy="315.2" r="1.2" fill="#e8e8f8"/>
<circle cx="590.5" cy="344" r="1.9" fill="#e8e8f8"/><circle cx="592.5" cy="345" r="1.8" fill="#e89050"/><circle cx="591.5" cy="342.5" r="1.2" fill="#d04040"/>
<!-- left toolbar icons -->
<path d="M7,75.5 L11,65 L15,75.5 Z" fill="#f4ecb0"/><path d="M11.5,66 Q16,63.5 17.5,68 L16.5,74 L13,70 Z" fill="#555"/><path d="M16,73 L19.5,76 L16,77 Z" fill="#333"/>
<path d="M7.5,86 L12.5,81.5 L17,85.5 L12,91 Z" fill="#8c8c8c"/><circle cx="12" cy="88" r="2" fill="#e8e060"/><path d="M16,88.5 L19,90.5 L16,92.5Z" fill="#bbb"/>
<path d="M7.5,101 L12,96.5 L17,100.5 L13,106 L8.5,105 Z" fill="#e4e040"/><path d="M16,103.5 L19,105.5 L16,107.5Z" fill="#bbb"/>
<path d="M9.3,118.5 L9.3,128 L11.6,126 L13.2,129.7 L14.7,129 L13.1,125.5 L16,125.3 Z" fill="#2a2a2a" stroke="#c0c0c0" stroke-width=".8"/><path d="M17,126.5 L20,128.5 L17,130.5Z" fill="#bbb"/>
<ellipse cx="12" cy="142" rx="5" ry="2.6" fill="#b01828"/><circle cx="12" cy="139" r="2.7" fill="#e0e0e0"/>
<ellipse cx="12" cy="159.5" rx="4.6" ry="2.2" fill="#c03018"/><circle cx="12" cy="156" r="3" fill="#e8e8e8"/>
<ellipse cx="12" cy="177" rx="4.6" ry="2.2" fill="#b01828"/><rect x="9.8" y="169.5" width="4.4" height="6.5" rx="1" fill="#b0a0a8"/><rect x="10" y="168" width="4" height="2.2" fill="#c02030"/>
<path d="M7,194 L11,185 L15,193 Z" fill="#9ad040"/><circle cx="11" cy="190.5" r="1.7" fill="#f0e060"/><path d="M7,194 L16,191.5" stroke="#e0e0e0" stroke-width="1"/><circle cx="15.5" cy="190.5" r="1.3" fill="#e04030"/><path d="M17,192.5 L20,194.5 L17,196.5Z" fill="#bbb"/>
<g fill="none" stroke="#d02c78" stroke-width="2.2"><path d="M8.5,212.5 V210 A2.8,2.8 0 0 1 14,210 V212"/><path d="M8.5,229.5 V227 A2.8,2.8 0 0 1 14,227 V229"/><path d="M8.5,246.5 V244 A2.8,2.8 0 0 1 14,244 V246"/><path d="M8,264 V259.5 A4,4 0 0 1 16,259.5 V264" stroke-width="2.8"/></g>
<rect x="10.5" y="211" width="6" height="5.5" fill="#444" stroke="#eee" stroke-width=".8"/><path d="M13.5,211 V216.5 M10.5,213.7 H16.5" stroke="#eee" stroke-width=".7"/>
<path d="M8,232.5 Q12,232.5 16,228.5" stroke="#eee" stroke-width="1" fill="none"/><circle cx="14" cy="248" r="1.4" fill="#eee"/>
<rect x="6.6" y="262.5" width="2.8" height="2" fill="#eee"/><rect x="14.6" y="262.5" width="2.8" height="2" fill="#eee"/>
<g fill="#bbb"><path d="M17,216 L20,218 L17,220Z"/><path d="M17,232 L20,234 L17,236Z"/><path d="M17,248 L20,250 L17,252Z"/><path d="M17,264 L20,266 L17,268Z"/></g>
<path d="M7.5,282.5 Q12,278.5 16.5,282.5 Q12,286.5 7.5,282.5Z" fill="#222" stroke="#888" stroke-width=".7"/><circle cx="12" cy="282.5" r="1.2" fill="#888"/>
<circle cx="11.5" cy="299" r="4.6" fill="#2a2a2a"/><circle cx="11.5" cy="299" r="3.2" fill="none" stroke="#aaa" stroke-width=".8"/><circle cx="13.5" cy="300.5" r="2" fill="#f0d8e0"/><circle cx="14" cy="301" r="1" fill="#d04080"/>
<path d="M7.5,315 Q12,321.5 17,315 Q12,317 7.5,315Z" fill="#f0f0f0"/><ellipse cx="12.2" cy="313.5" rx="2.4" ry="2" fill="#888"/><path d="M17,318.5 L20,320.5 L17,322.5Z" fill="#bbb"/>
<path d="M7.5,450.5 L13,447.5 L16.5,450.5 L11.5,455 Z" fill="#f0f0f0"/><path d="M7.5,450.5 L11.5,455 L11.5,456.5 L7.5,452Z" fill="#aaa"/><path d="M16.5,455 L19.5,457 L16.5,459Z" fill="#bbb"/>
<ellipse cx="12" cy="466.5" rx="4.6" ry="3.3" fill="#e0e0e0"/><ellipse cx="12" cy="465.8" rx="3" ry="1.6" fill="#aaa"/><path d="M16.5,470.5 L19.5,472.5 L16.5,474.5Z" fill="#bbb"/>
<!-- right toolbar icons -->
<path d="M466.3,78.5 L471,76 L475.7,78.5 L471,81 Z" fill="none" stroke="#eee" stroke-width="1"/><ellipse cx="471" cy="78.5" rx="1.5" ry=".9" fill="#eee"/>
<rect x="467" y="92.5" width="8" height="5.8" rx=".8" fill="#ececec"/><path d="M468.6,92.5 V90.8 A2.4,2.4 0 0 1 473.4,90.8 V92.5" fill="none" stroke="#ececec" stroke-width="1.2"/>
<circle cx="471" cy="108.5" r="2.9" fill="none" stroke="#b4b4b4" stroke-width="1"/><rect x="469.8" y="111.3" width="2.4" height="3" fill="#b4b4b4"/><circle cx="471" cy="108.5" r="1" fill="#ccc"/>
<circle cx="470.5" cy="125" r="4" fill="#e8e8e8"/><circle cx="471.5" cy="126" r="2.6" fill="#bbb"/><circle cx="471.5" cy="126" r="1.6" fill="#f4f4f4"/><path d="M475.5,128.5 L478.5,130.5 L475.5,132.5Z" fill="#bbb"/>
<ellipse cx="471" cy="140" rx="2.9" ry="3.4" fill="#fff"/><rect x="469.7" y="143" width="2.6" height="2.5" fill="#f4f4e0"/><path d="M475.5,144.5 L478.5,146.5 L475.5,148.5Z" fill="#333"/>
<circle cx="470.5" cy="155.5" r="2.6" fill="none" stroke="#eee" stroke-width="1.1"/><rect x="469.5" y="158" width="2" height="2.6" fill="#eee"/><circle cx="470.5" cy="155.5" r=".9" fill="#eee"/><path d="M475.5,159.5 L478.5,161.5 L475.5,163.5Z" fill="#bbb"/>
<circle cx="470.5" cy="170.5" r="2.6" fill="none" stroke="#eee" stroke-width="1.1"/><path d="M467,176 H474" stroke="#eee" stroke-width="1.5"/><rect x="469.8" y="173" width="1.5" height="2.5" fill="#eee"/><path d="M475.5,175 L478.5,177 L475.5,179Z" fill="#bbb"/>
<circle cx="470.5" cy="190.5" r="4.6" fill="#222"/><circle cx="470.5" cy="190.5" r="2.8" fill="none" stroke="#eee" stroke-width="1.2"/><circle cx="470.5" cy="190.5" r="1" fill="#eee"/><path d="M475.5,194 L478.5,196 L475.5,198Z" fill="#333"/>
<path d="M466.5,203.5 Q470,200.5 474,204 Q470.5,206.5 466.5,203.5Z" fill="none" stroke="#eee" stroke-width=".9"/><path d="M468.5,206 L474.5,207.5" stroke="#eee" stroke-width=".9"/><path d="M473.5,209 L478.5,209 L476,212Z" fill="#bbb"/>
<circle cx="471" cy="226" r="1.8" fill="#f0f0f0"/>
<path d="M468,245 L473.5,239.5" stroke="#ddd" stroke-width="1"/><circle cx="469" cy="244" r="1.4" fill="#ddd"/>
<path d="M468,261 L473,255.5" stroke="#ddd" stroke-width="1"/><circle cx="472.5" cy="256" r="1.5" fill="#eee"/>
<circle cx="468.5" cy="276.5" r="1.3" fill="#eee"/><text x="470" y="275" font-size="5.2" font-weight="bold" fill="#eee" font-family="Liberation Sans, sans-serif">12</text>
<path d="M467,292.5 L473,288 L474.5,294.5 Z" fill="#f0f0f0"/><path d="M472,289 L473.5,286.5" stroke="#eee" stroke-width="1"/>
<path d="M467,308.5 L472,304.5 L474.5,311 Z" fill="#f0f0f0"/><text x="470.5" y="306" font-size="4.6" font-weight="bold" fill="#eee" font-family="Liberation Sans, sans-serif">12</text>
<path d="M467.5,329 V319.5 H476" stroke="#eee" stroke-width="1.1" fill="none"/><path d="M469.5,327 Q470,322 475,321.5" stroke="#888" stroke-width=".7" fill="none"/>
<g fill="#eee"><rect x="467" y="335" width="1.8" height="1.8"/><rect x="473.5" y="335" width="1.8" height="1.8"/><rect x="467" y="341.5" width="1.8" height="1.8"/><rect x="473.5" y="341.5" width="1.8" height="1.8"/></g><path d="M468.5,336.5 L474,342 M474,336.5 L468.5,342" stroke="#bbb" stroke-width=".9"/>
<path d="M471,355.5 L474,351.5 M471,355.5 L474,359.5 M471,355.5 L466.5,355.5" stroke="#eee" stroke-width="1.2"/><circle cx="471" cy="355.5" r="1.5" fill="#eee"/>
<circle cx="471" cy="372" r="4.2" fill="none" stroke="#e8e8e8" stroke-width="1"/><rect x="468.8" y="369.8" width="4.4" height="4.4" fill="#e8e8e8"/>
<path d="M466.5,402 Q471,397.5 475.5,402 L475.5,408.5 L466.5,408.5 Z" fill="#f4f4f4"/><rect x="468" y="404" width="6" height="1.5" fill="#777"/><rect x="466.5" y="407" width="9" height="1.5" fill="#555"/>
<path d="M471,434 L468.3,428.8 A3,3 0 1 1 473.7,428.8 Z" fill="#f8f8f8"/><circle cx="471" cy="427.5" r="1.1" fill="#a88"/><path d="M475,431.5 L478,434 L476,435Z" fill="#333"/>
<!-- viewport stuff: crosshair, axis, cursor -->
<path d="M230.5,242.8 H251 M241.1,233.5 V251" stroke="#30d030" stroke-width=".8"/><path d="M241.1,236 L242.5,241" stroke="#30d030" stroke-width=".6"/>
<path d="M35.5,462 V453.5" stroke="#d8f0d8" stroke-width="1"/><path d="M35.5,462 H46.5" stroke="#e03030" stroke-width="1"/><circle cx="35" cy="466" r="1.7" fill="#2020e0"/><path d="M35.5,462.5 L34.5,468" stroke="#2020e0" stroke-width="1.6"/>
<text x="36.5" y="451.5" font-size="7" fill="#40d040" font-family="Liberation Sans, sans-serif">y</text><text x="47.5" y="463.5" font-size="7" fill="#e03030" font-family="Liberation Sans, sans-serif">x</text>
<path d="M392.3,388.5 L392.3,399.5 L395,397 L397,401.3 L398.8,400.5 L396.9,396.4 L400.3,396.2 Z" fill="#fff" stroke="#111" stroke-width=".8"/>
<!-- timeline icons -->
<g fill="#f0f0f0"><rect x="15" y="487" width="1.5" height="6.5"/><path d="M20.5,487 V493.5 L16.5,490.2Z"/><path d="M24.5,487 V493.5 L20.5,490.2Z"/>
<path d="M39,487.5 V493.5 L35,490.5Z"/><path d="M53.5,486 V495 L46.5,490.5Z"/><rect x="62" y="487" width="6.5" height="6.5" fill="#f8f0d0"/>
<path d="M78,486 V495 L85,490.5Z"/><path d="M93,487.5 V493.5 L97,490.5Z"/></g>
<rect x="32.5" y="487" width="1.6" height="7" fill="#70c040"/><rect x="98" y="487" width="1.6" height="7" fill="#70c040"/>
<g fill="#f0f0f0"><circle cx="836" cy="488" r="1.3"/><rect x="834" y="490.5" width="8" height="3"/><rect x="840" y="487.5" width="3" height="2"/></g>
<circle cx="853" cy="490.5" r="4" fill="#fff8e0" stroke="#544" stroke-width=".8"/><path d="M853,488 V491" stroke="#333" stroke-width="1"/>
<path d="M864,492 H871 M864,489.5 A3.5,3 0 0 1 871,489.5 L871,491" stroke="#f0f0f0" stroke-width="1.2" fill="none"/><path d="M866,494 L870,494 L868,496.5Z" fill="#ccc"/>
<rect x="879" y="486" width="3.5" height="9" rx="1.7" fill="#f0f0f0"/><path d="M877,488 V493 M884.5,488 V493" stroke="#ccc" stroke-width=".8"/>
<rect x="889.5" y="487" width="5.5" height="5.5" fill="#f0f0f0"/><path d="M892.5,490.5 L896.5,493.5 L894.5,495.5Z" fill="#fff" stroke="#333" stroke-width=".4"/>
</svg>
</body></html>
